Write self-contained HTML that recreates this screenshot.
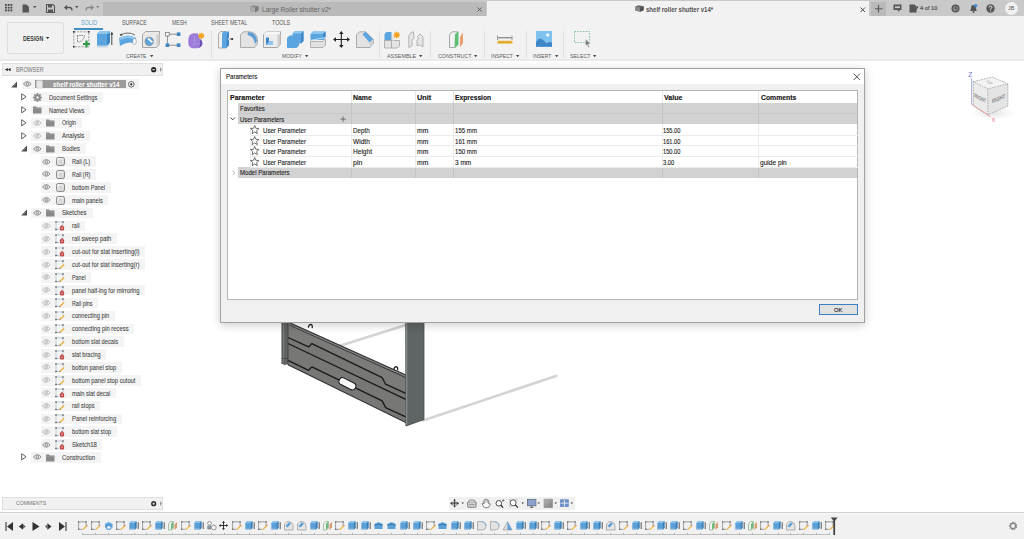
<!DOCTYPE html><html><head><meta charset="utf-8"><style>
*{box-sizing:border-box;margin:0;padding:0}
html,body{width:1024px;height:539px;overflow:hidden;background:#fff;font-family:"Liberation Sans",sans-serif;}
.a{position:absolute}
.t{position:absolute;white-space:nowrap;line-height:1}
svg{position:absolute;overflow:visible}
</style></head><body>

<div class="a" style="left:0;top:0;width:1024px;height:16px;background:#c9c9c9"></div>
<svg style="left:4.9px;top:4.4px" width="8" height="8"><rect x="0.00" y="0.00" width="1.8" height="1.8" fill="#444"/><rect x="0.00" y="2.75" width="1.8" height="1.8" fill="#444"/><rect x="0.00" y="5.50" width="1.8" height="1.8" fill="#444"/><rect x="2.75" y="0.00" width="1.8" height="1.8" fill="#444"/><rect x="2.75" y="2.75" width="1.8" height="1.8" fill="#444"/><rect x="2.75" y="5.50" width="1.8" height="1.8" fill="#444"/><rect x="5.50" y="0.00" width="1.8" height="1.8" fill="#444"/><rect x="5.50" y="2.75" width="1.8" height="1.8" fill="#444"/><rect x="5.50" y="5.50" width="1.8" height="1.8" fill="#444"/></svg>
<svg style="left:22px;top:4px" width="8" height="9"><path d="M0.5 0.5H4.5L7 3V8.5H0.5Z" fill="#555"/></svg>
<svg style="left:33px;top:6px" width="4" height="3"><path d="M0 0H3.5L1.75 2.2Z" fill="#555"/></svg>
<svg style="left:46px;top:4px" width="9" height="9"><path d="M0.5 0.5H7L8.5 2V8.5H0.5Z" fill="none" stroke="#555" stroke-width="1.1"/><rect x="2" y="1" width="4" height="2.5" fill="#555"/><rect x="2" y="5.5" width="5" height="2.5" fill="#555"/></svg>
<svg style="left:64px;top:4px" width="9" height="8"><path d="M2 3.5H5.5Q8 3.5 8 6.5" fill="none" stroke="#555" stroke-width="1.3"/><path d="M0 3.5L3 0.8V6.2Z" fill="#555"/></svg>
<svg style="left:75px;top:6px" width="4" height="3"><path d="M0 0H3.5L1.75 2.2Z" fill="#555"/></svg>
<svg style="left:85px;top:4px" width="9" height="8"><path d="M7 3.5H3.5Q1 3.5 1 6.5" fill="none" stroke="#888" stroke-width="1.3"/><path d="M9 3.5L6 0.8V6.2Z" fill="#888"/></svg>
<svg style="left:96px;top:6px" width="4" height="3"><path d="M0 0H3.5L1.75 2.2Z" fill="#888"/></svg>
<div class="a" style="left:103px;top:2px;width:383px;height:14px;background:#bababa"></div>
<svg style="left:250.2px;top:5.1px" width="9" height="8"><path d="M0.3 1.6L3.6 0.2L8.4 1.2V5.6L5 7.3L0.3 6Z" fill="#8e8e8e"/><path d="M0.3 1.6L5 2.7V7.3L0.3 6Z" fill="#a9a9a9"/><path d="M5 2.7L8.4 1.2V5.6L5 7.3Z" fill="#7a7a7a"/></svg>
<div class="t" style="left:261.6px;top:7.00px;font-size:6.9px;color:#666;transform:scaleX(0.9520);transform-origin:0 0;">Large Roller shutter v2*</div>
<svg style="left:477px;top:7px" width="5" height="5"><path d="M0.5 0.5L4.5 4.5M4.5 0.5L0.5 4.5" stroke="#555" stroke-width="0.9"/></svg>
<div class="a" style="left:487px;top:1px;width:382px;height:15px;background:#f2f2f2"></div>
<svg style="left:634.8px;top:5.2px" width="9" height="7"><path d="M0.3 1.6L3.6 0.2L8.6 1.2V5.3L5.2 6.8L0.3 5.6Z" fill="#6a6a6a"/><path d="M0.3 1.6L5.2 2.6V6.8L0.3 5.6Z" fill="#8a8a8a"/><path d="M5.2 2.6L8.6 1.2V5.3L5.2 6.8Z" fill="#4e4e4e"/></svg>
<div class="t" style="left:645.8px;top:6.00px;font-size:7.4px;color:#505050;font-weight:bold;transform:scaleX(0.8170);transform-origin:0 0;">shelf roller shutter v14*</div>
<svg style="left:860px;top:7px" width="6" height="6"><path d="M0.5 0.5L5 5M5 0.5L0.5 5" stroke="#4a4a4a" stroke-width="1"/></svg>
<div class="a" style="left:871px;top:2px;width:15px;height:14px;background:#b9b9b9"></div>
<svg style="left:875px;top:5px" width="8" height="8"><path d="M3.5 0V7.5M0 3.75H7.5" stroke="#5a5a5a" stroke-width="1.2"/></svg>
<svg style="left:893px;top:4px" width="9" height="9"><path d="M0.5 0.5H8.5V6H6.5L6 8L4.5 6H0.5Z" fill="#555"/><rect x="2" y="2.3" width="5" height="1.8" fill="#c7c7c7"/></svg>
<svg style="left:909px;top:4px" width="10" height="9"><path d="M0.5 0.5H5.5L7.5 2.5V8.5H0.5Z" fill="#555"/><path d="M5 7.5L9 2.5" stroke="#555" stroke-width="1.3"/></svg>
<div class="t" style="left:920.4px;top:6.00px;font-size:5.9px;color:#4a4a4a;transform:scaleX(0.9700);transform-origin:0 0;-webkit-text-stroke:0.15px #4a4a4a;">4 of 10</div>
<svg style="left:951px;top:4px" width="9" height="9"><circle cx="4.5" cy="4.5" r="4" fill="#555"/><circle cx="4.5" cy="4.5" r="2.6" fill="#888"/><path d="M4.5 2.7V4.7H6" stroke="#333" stroke-width="0.7" fill="none"/></svg>
<svg style="left:969px;top:3px" width="10" height="10"><path d="M1 8H8Q7 7 7 5Q7 2 4.5 2Q2 2 2 5Q2 7 1 8Z" fill="#555"/><circle cx="4.5" cy="9" r="1" fill="#555"/><circle cx="6.8" cy="2.7" r="1.6" fill="#3c8fd8"/></svg>
<svg style="left:986px;top:4px" width="9" height="9"><circle cx="4.5" cy="4.5" r="4.2" fill="#555"/><path d="M3 3.5Q3 2 4.5 2Q6 2 6 3.3Q6 4.2 4.6 4.8V5.6" stroke="#eee" stroke-width="1" fill="none"/><circle cx="4.6" cy="7" r="0.6" fill="#eee"/></svg>
<div class="a" style="left:1005px;top:1.5px;width:13px;height:13px;border-radius:50%;background:#f1f1f1"></div>
<div class="t" style="left:1008px;top:6.00px;font-size:5.4px;color:#555;transform:scaleX(0.9838);transform-origin:0 0;">JB</div>
<div class="a" style="left:0;top:16px;width:1024px;height:43px;background:#f2f2f2"></div>
<div class="a" style="left:0;top:59px;width:1024px;height:2px;background:#eaeaea"></div>
<div class="a" style="left:7px;top:22px;width:57px;height:32px;border:1px solid #dedede;border-radius:2px;background:#f1f1f1"></div>
<div class="t" style="left:22.6px;top:36.00px;font-size:6.5px;color:#3a3a3a;font-weight:bold;transform:scaleX(0.8146);transform-origin:0 0;">DESIGN</div>
<svg style="left:45.6px;top:37.3px" width="4" height="3"><path d="M0 0H3.3L1.65 2.1Z" fill="#222"/></svg>
<div class="t" style="left:80.5px;top:20.00px;font-size:6.3px;color:#5ba3c9;transform:scaleX(0.8516);transform-origin:0 0;">SOLID</div>
<div class="t" style="left:122px;top:20.00px;font-size:6.3px;color:#555;transform:scaleX(0.8368);transform-origin:0 0;">SURFACE</div>
<div class="t" style="left:172.2px;top:20.00px;font-size:6.3px;color:#555;transform:scaleX(0.8076);transform-origin:0 0;">MESH</div>
<div class="t" style="left:211.3px;top:20.00px;font-size:6.3px;color:#555;transform:scaleX(0.8361);transform-origin:0 0;">SHEET METAL</div>
<div class="t" style="left:272.2px;top:20.00px;font-size:6.3px;color:#555;transform:scaleX(0.8522);transform-origin:0 0;">TOOLS</div>
<div class="a" style="left:74px;top:28px;width:29px;height:2px;background:#3f8fc0"></div>
<div class="t" style="left:125.9px;top:53.00px;font-size:6.2px;color:#5a5a5a;transform:scaleX(0.8303);transform-origin:0 0;">CREATE</div>
<svg style="left:149.50px;top:54.6px" width="4" height="3"><path d="M0 0H3.4L1.7 2.2Z" fill="#444"/></svg>
<div class="t" style="left:281.5px;top:53.00px;font-size:6.2px;color:#5a5a5a;transform:scaleX(0.8296);transform-origin:0 0;">MODIFY</div>
<svg style="left:305.10px;top:54.6px" width="4" height="3"><path d="M0 0H3.4L1.7 2.2Z" fill="#444"/></svg>
<div class="t" style="left:386.9px;top:53.00px;font-size:6.2px;color:#5a5a5a;transform:scaleX(0.8766);transform-origin:0 0;">ASSEMBLE</div>
<svg style="left:419.30px;top:54.6px" width="4" height="3"><path d="M0 0H3.4L1.7 2.2Z" fill="#444"/></svg>
<div class="t" style="left:438px;top:53.00px;font-size:6.2px;color:#5a5a5a;transform:scaleX(0.8608);transform-origin:0 0;">CONSTRUCT</div>
<svg style="left:473.90px;top:54.6px" width="4" height="3"><path d="M0 0H3.4L1.7 2.2Z" fill="#444"/></svg>
<div class="t" style="left:490.7px;top:53.00px;font-size:6.2px;color:#5a5a5a;transform:scaleX(0.8187);transform-origin:0 0;">INSPECT</div>
<svg style="left:515.60px;top:54.6px" width="4" height="3"><path d="M0 0H3.4L1.7 2.2Z" fill="#444"/></svg>
<div class="t" style="left:533.2px;top:53.00px;font-size:6.2px;color:#5a5a5a;transform:scaleX(0.8089);transform-origin:0 0;">INSERT</div>
<svg style="left:554.60px;top:54.6px" width="4" height="3"><path d="M0 0H3.4L1.7 2.2Z" fill="#444"/></svg>
<div class="t" style="left:570.1px;top:53.00px;font-size:6.2px;color:#5a5a5a;transform:scaleX(0.8541);transform-origin:0 0;">SELECT</div>
<svg style="left:593.20px;top:54.6px" width="4" height="3"><path d="M0 0H3.4L1.7 2.2Z" fill="#444"/></svg>
<div class="a" style="left:211px;top:31px;width:1px;height:26.5px;background:#e0e0e0"></div>
<div class="a" style="left:378.5px;top:31px;width:1px;height:26.5px;background:#e0e0e0"></div>
<div class="a" style="left:430px;top:31px;width:1px;height:26.5px;background:#e0e0e0"></div>
<div class="a" style="left:483.5px;top:31px;width:1px;height:26.5px;background:#e0e0e0"></div>
<div class="a" style="left:526px;top:31px;width:1px;height:26.5px;background:#e0e0e0"></div>
<div class="a" style="left:562.5px;top:31px;width:1px;height:26.5px;background:#e0e0e0"></div>
<svg style="left:73px;top:31px" width="18" height="18"><rect x="0.8" y="0.8" width="15" height="15" fill="none" stroke="#8a8a8a" stroke-width="0.8" stroke-dasharray="2.2,1"/>
<rect x="0" y="0" width="1.6" height="1.6" fill="#333"/><rect x="15" y="0" width="1.6" height="1.6" fill="#333"/><rect x="0" y="15" width="1.6" height="1.6" fill="#333"/>
<path d="M4.5 4.5V11H5.5Q11 10 11.5 4.5H4.5" fill="none" stroke="#555" stroke-width="0.7" stroke-dasharray="1.5,0.8"/>
<path d="M13.5 9.5V16.5M10 13H17" stroke="#2f9a45" stroke-width="2.2"/></svg>
<svg style="left:97px;top:31px" width="16" height="18"><path d="M0 3L3 0H13V12L10 15H0Z" fill="#5aa5e0"/><path d="M0 3L3 0H13L10 3Z" fill="#8ec6f0"/><path d="M10 3H13V12L10 15Z" fill="#3f86c4"/>
<path d="M0 14.5H10L13 11.5V13.5L10 16.5H0Z" fill="#c5d8e8"/><path d="M14.8 2V14" stroke="#333" stroke-width="0.9"/><path d="M13.3 3.5L14.8 0.8L16.3 3.5Z" fill="#333"/></svg>
<svg style="left:119px;top:32px" width="19" height="16"><path d="M1.5 3Q9 -1 16 3" fill="none" stroke="#444" stroke-width="0.8"/><path d="M0.5 3L3 1.5L2.5 4Z" fill="#222"/>
<path d="M0 6Q9 1 17 6V12Q9 8 1 14Z" fill="#5aa5e0"/><path d="M0 6Q9 1 17 6L15 8Q9 4 2 8Z" fill="#8ec6f0"/><ellipse cx="15.5" cy="9.5" rx="1.8" ry="3" fill="#fff" stroke="#888" stroke-width="0.6"/></svg>
<svg style="left:142px;top:31px" width="18" height="17"><path d="M0.5 3.5L3.5 0.5H17.5V13.5L14.5 16.5H0.5Z" fill="#e9e9e9" stroke="#9c9c9c" stroke-width="0.9"/><path d="M14.5 3.5H17.5V13.5L14.5 16.5Z" fill="#cfcfcf"/>
<circle cx="7.2" cy="10.4" r="4.1" fill="#5aa5e0" stroke="#8a8a8a" stroke-width="0.8"/><path d="M6 7.3L10.4 11.3" stroke="#fff" stroke-width="1.7"/></svg>
<svg style="left:165px;top:32px" width="16" height="16"><path d="M2.4 2.2H13.5M2.4 2.2V13.2M2.4 13.2H13.5" stroke="#777" stroke-width="0.8"/><rect x="0.6" y="0.4" width="3.6" height="3.6" fill="#fff" stroke="#777" stroke-width="0.8"/>
<rect x="11.8" y="0.4" width="3.6" height="3.6" fill="#3f86c4"/><rect x="0.6" y="11.4" width="3.6" height="3.6" fill="#3f86c4"/><rect x="11.8" y="11.4" width="3.6" height="3.6" fill="#3f86c4"/></svg>
<svg style="left:188px;top:32px" width="18" height="17"><path d="M0.5 6Q1.5 1.5 6 1.2L10 1.5L11.5 6.5L13.5 8Q15.5 13 12 15.5L9 16.2H4.5Q0.5 15.5 0.3 11Z" fill="#9b7ad8"/><path d="M11.5 7Q15.5 9 14 13.5L11 16Q13 11 11.5 7Z" fill="#6d4fb2"/>
<path d="M3 8H12M6.5 3V15M3 12H12" stroke="#b79ae8" stroke-width="0.5"/><path d="M16.90 3.80L15.42 4.68L15.85 6.35L14.18 5.92L13.30 7.40L12.42 5.92L10.75 6.35L11.18 4.68L9.70 3.80L11.18 2.92L10.75 1.25L12.42 1.68L13.30 0.20L14.18 1.68L15.85 1.25L15.42 2.92Z" fill="#f2a51e"/></svg>
<svg style="left:218px;top:31px" width="16" height="18"><path d="M0.5 3L2.5 0.5H8V17H0.5Z" fill="#f0f0f0" stroke="#9a9a9a" stroke-width="0.8"/><path d="M4 2L6 0.5H11V14L8 17H4Z" fill="#5aa5e0"/><path d="M9 3L11 0.5V14L8.5 17Z" fill="#3f86c4"/>
<circle cx="11" cy="8" r="0.9" fill="#eee"/><path d="M11.5 8H14" stroke="#222" stroke-width="0.7"/><circle cx="14.2" cy="8" r="1" fill="#222"/></svg>
<svg style="left:240px;top:31px" width="18" height="17"><path d="M0.5 4L3.5 0.8H9Q17.5 1 17.5 10V13L14.5 16.5H0.5Z" fill="#e3e3e3" stroke="#9a9a9a" stroke-width="0.8"/><path d="M8 1Q16.5 1.5 17 10L15 13Q14 5 7.5 4Z" fill="#5d9ed5"/><path d="M14.5 13.5L17.5 10.5V13L14.5 16.5Z" fill="#cfcfcf"/></svg>
<svg style="left:263px;top:31px" width="18" height="17"><path d="M0.5 3.5L3.5 0.5H17.5V13.5L14.5 16.5H0.5Z" fill="#ececec" stroke="#9c9c9c" stroke-width="0.9"/><path d="M3.5 0.5H17.5L14.5 3.5H0.5Z" fill="#f7f7f7"/><path d="M14.5 3.5H17.5V13.5L14.5 16.5Z" fill="#cdcdcd"/>
<path d="M3 6.5H6V10.5H10V14H3Z" fill="#3f86c4"/><path d="M6 10.5H10V14H3Z" fill="#8ec6f0"/></svg>
<svg style="left:287px;top:31px" width="17" height="17"><path d="M5.5 2.5L8 0H16.5V10L14 12.5H12V14.5L9.5 17H0V7L2.5 4.5H5.5Z" fill="#5aa5e0"/><path d="M14 2.5L16.5 0V10L14 12.5Z" fill="#3f86c4"/><path d="M5.5 2.5L8 0H16.5L14 2.5Z" fill="#8ec6f0"/></svg>
<svg style="left:310px;top:31px" width="17" height="17"><path d="M0.5 3L3 0.5H15.5V6.5L13 9H0.5Z" fill="#5aa5e0"/><path d="M3 0.5H15.5L13 3H0.5Z" fill="#8ec6f0"/><path d="M13 3L15.5 0.5V6.5L13 9Z" fill="#3f86c4"/>
<path d="M0 9.5L15.5 6.5" stroke="#bfe3f7" stroke-width="1"/><path d="M0.5 10.5H13L15.5 8V14L13 16.5H0.5Z" fill="#e2e2e2" stroke="#999" stroke-width="0.7"/></svg>
<svg style="left:333px;top:31px" width="17" height="17"><path d="M8.3 1.5V15.5M1.5 8.5H15.5" stroke="#222" stroke-width="1.1"/><path d="M8.3 0L10.5 3H6.1Z M8.3 17L10.5 14H6.1Z M0 8.5L3 6.3V10.7Z M17 8.5L14 6.3V10.7Z" fill="#222"/></svg>
<svg style="left:356px;top:31px" width="18" height="17"><path d="M0.5 4L3.5 0.8H9.5L17.5 8.5V12.5L14 16.5H0.5Z" fill="#e3e3e3" stroke="#9a9a9a" stroke-width="0.8"/><path d="M6.5 3.5L9.5 0.8L17 8.3L13.5 11.5Z" fill="#5ea6e0"/><path d="M13.5 11.5L17.5 8.5V12.5L14 16.5Z" fill="#cfcfcf"/></svg>
<svg style="left:384px;top:31px" width="17" height="17"><path d="M0.5 3L2.5 1H7.5V9.5H0.5Z" fill="#5aa5e0"/><path d="M0.5 9.5H15.5V15L13.5 17H0.5Z" fill="#e4e4e4" stroke="#999" stroke-width="0.7"/><path d="M7.5 5V17" stroke="#888" stroke-width="0.6"/>
<path d="M7.5 9.5V5H10V9.5" fill="#e4e4e4"/><path d="M16.50 4.00L14.92 4.92L15.39 6.69L13.62 6.22L12.70 7.80L11.78 6.22L10.01 6.69L10.48 4.92L8.90 4.00L10.48 3.08L10.01 1.31L11.78 1.78L12.70 0.20L13.62 1.78L15.39 1.31L14.92 3.08Z" fill="#f2a51e"/></svg>
<svg style="left:408px;top:31px" width="16" height="17"><path d="M0.8 5L3 1.5L5.5 0.8L6 7.5L4 8.5V15L0.8 16.5Z" fill="#e6e6e6" stroke="#999" stroke-width="0.7"/><path d="M9.5 5.5L12 3L15 6V16L12 14L9 14.5V9L10.5 8Z" fill="#e6e6e6" stroke="#999" stroke-width="0.7"/></svg>
<svg style="left:449px;top:31px" width="18" height="17"><path d="M0.5 4L3 0.8H8.5V13.5L6 16.5H0.5Z" fill="#f2f2f2" stroke="#888" stroke-width="0.7"/><path d="M6 3.5L8.5 0.8H9.5V13.5L6.5 16.5H5.5Z" fill="#5fbf78"/><path d="M11 6L14 1.5V12L11 16.5Z" fill="#e8a070"/></svg>
<svg style="left:497px;top:35px" width="16" height="10"><path d="M0.5 0.5V5M15 0.5V5" stroke="#777" stroke-width="0.7"/><path d="M1 2.8H14.5" stroke="#444" stroke-width="0.8"/><rect x="0.5" y="5.8" width="15" height="2.8" fill="#e8b030"/><path d="M2 7.2H14" stroke="#c08a10" stroke-width="0.5" stroke-dasharray="1,1"/></svg>
<svg style="left:536px;top:31px" width="16" height="16"><rect x="0" y="0" width="16" height="15.7" fill="#7ec0ee"/><path d="M0 15.7V11Q3 6 5.5 8Q9 10 10.5 12.5Q12.5 10 16 11.5V15.7Z" fill="#3d87c8"/><circle cx="11.7" cy="4" r="1.8" fill="#eaf6ff"/></svg>
<svg style="left:574px;top:31px" width="17" height="17"><rect x="0.5" y="0.5" width="15" height="11" fill="none" stroke="#6fb88a" stroke-width="0.8" stroke-dasharray="1.6,1.2"/><path d="M11.5 8L11.5 15L13 13.5L14.5 16.5L15.5 16L14.2 13H16.5Z" fill="#777" stroke="#f2f2f2" stroke-width="0.4"/></svg>
<div class="a" style="left:2px;top:63px;width:161px;height:13px;background:#f1f1f1;border:1px solid #dfdfdf"></div>
<svg style="left:4.8px;top:67.7px" width="6" height="4"><path d="M0 1.6L2.8 0V3.2Z M2.8 1.6L5.6 0V3.2Z" fill="#222"/></svg>
<div class="t" style="left:15.8px;top:67.00px;font-size:6.5px;color:#727272;transform:scaleX(0.8218);transform-origin:0 0;">BROWSER</div>
<svg style="left:151px;top:66.5px" width="6" height="6"><circle cx="2.7" cy="2.7" r="2.6" fill="#222"/><rect x="1.3" y="2.2" width="2.8" height="1" fill="#eee"/></svg>
<svg style="left:159.5px;top:67px" width="3" height="5"><path d="M0 0L2 2.5L0 5Z" fill="#999"/></svg>
<div class="a" style="left:21.7px;top:79.10px;width:117.3px;height:10px;background:#f3f3f3"></div>
<div class="a" style="left:35px;top:80.20px;width:91px;height:8px;background:#9a9a9a"></div>
<svg style="left:11.00px;top:80.70px" width="7" height="7"><path d="M0.2 6.6L6 0.4V6.6Z" fill="#4a4a4a"/><path d="M2.8 5.4L5 3.1" stroke="#bbb" stroke-width="0.5"/></svg>
<svg style="left:22.90px;top:81.40px" width="9" height="6"><path d="M0.5 2.9Q4.3 -1.6 8.1 2.9Q4.3 7.4 0.5 2.9Z" fill="none" stroke="#858585" stroke-width="0.95"/><circle cx="4.3" cy="2.9" r="1.25" fill="none" stroke="#858585" stroke-width="0.9"/></svg>
<svg style="left:36px;top:80.10px" width="7" height="8.5"><rect x="0.5" y="0.5" width="6" height="7.5" rx="1" fill="#e9e9e9" stroke="#c8c8c8" stroke-width="0.5"/><path d="M0.5 2.5H6.5" stroke="#ccc" stroke-width="0.5"/></svg>
<div class="t" style="left:53.1px;top:82.00px;font-size:6.7px;color:#fff;font-weight:bold;transform:scaleX(0.9268);transform-origin:0 0;">shelf roller shutter v14</div>
<svg style="left:128.3px;top:81.00px" width="7" height="7"><circle cx="3.3" cy="3.3" r="2.8" fill="none" stroke="#333" stroke-width="0.7"/><circle cx="3.3" cy="3.3" r="1.1" fill="#222"/></svg>
<div class="a" style="left:31.2px;top:91.96px;width:71.8px;height:10.5px;background:#f4f4f4"></div>
<svg style="left:21.20px;top:93.26px" width="7" height="8"><path d="M0.7 0.7L5.1 3.8L0.7 6.9Z" fill="none" stroke="#606060" stroke-width="1" stroke-linejoin="round"/></svg>
<svg style="left:32.6px;top:92.56px" width="9" height="9"><g transform="translate(4.5 4.5)"><circle r="3" fill="#8a8a8a"/><rect x="-0.9" y="-4.4" width="1.8" height="2.2" fill="#8a8a8a" transform="rotate(0)"/><rect x="-0.9" y="-4.4" width="1.8" height="2.2" fill="#8a8a8a" transform="rotate(45)"/><rect x="-0.9" y="-4.4" width="1.8" height="2.2" fill="#8a8a8a" transform="rotate(90)"/><rect x="-0.9" y="-4.4" width="1.8" height="2.2" fill="#8a8a8a" transform="rotate(135)"/><rect x="-0.9" y="-4.4" width="1.8" height="2.2" fill="#8a8a8a" transform="rotate(180)"/><rect x="-0.9" y="-4.4" width="1.8" height="2.2" fill="#8a8a8a" transform="rotate(225)"/><rect x="-0.9" y="-4.4" width="1.8" height="2.2" fill="#8a8a8a" transform="rotate(270)"/><rect x="-0.9" y="-4.4" width="1.8" height="2.2" fill="#8a8a8a" transform="rotate(315)"/><circle r="1.3" fill="#f0f0f0"/></g></svg>
<div class="t" style="left:49px;top:95.00px;font-size:6.6px;color:#444;transform:scaleX(0.8662);transform-origin:0 0;-webkit-text-stroke:0.08px #444;">Document Settings</div>
<div class="a" style="left:31.2px;top:104.83px;width:58.8px;height:10.5px;background:#f4f4f4"></div>
<svg style="left:21.20px;top:106.13px" width="7" height="8"><path d="M0.7 0.7L5.1 3.8L0.7 6.9Z" fill="none" stroke="#606060" stroke-width="1" stroke-linejoin="round"/></svg>
<svg style="left:33px;top:106.23px" width="9" height="8"><path d="M0 0.5H3L4 1.5H8.5V7.5H0Z" fill="#8a8a8a"/><path d="M0 2.2H8.5" stroke="#a9a9a9" stroke-width="0.5"/></svg>
<div class="t" style="left:49px;top:108.00px;font-size:6.6px;color:#444;transform:scaleX(0.8696);transform-origin:0 0;-webkit-text-stroke:0.08px #444;">Named Views</div>
<div class="a" style="left:31.2px;top:117.69px;width:50.8px;height:10.5px;background:#f4f4f4"></div>
<svg style="left:21.20px;top:118.99px" width="7" height="8"><path d="M0.7 0.7L5.1 3.8L0.7 6.9Z" fill="none" stroke="#606060" stroke-width="1" stroke-linejoin="round"/></svg>
<svg style="left:32.90px;top:119.99px" width="9" height="6"><path d="M0.5 2.9Q4.3 -1.6 8.1 2.9Q4.3 7.4 0.5 2.9Z" fill="none" stroke="#bcbcbc" stroke-width="0.95"/><circle cx="4.3" cy="2.9" r="1.25" fill="none" stroke="#bcbcbc" stroke-width="0.9"/><path d="M2.6 5.6L6 0.2" stroke="#bcbcbc" stroke-width="0.7"/></svg>
<svg style="left:46px;top:119.09px" width="9" height="8"><path d="M0 0.5H3L4 1.5H8.5V7.5H0Z" fill="#8a8a8a"/><path d="M0 2.2H8.5" stroke="#a9a9a9" stroke-width="0.5"/></svg>
<div class="t" style="left:62.3px;top:120.00px;font-size:6.6px;color:#444;transform:scaleX(0.7953);transform-origin:0 0;-webkit-text-stroke:0.08px #444;">Origin</div>
<div class="a" style="left:31.2px;top:130.56px;width:59.2px;height:10.5px;background:#f4f4f4"></div>
<svg style="left:21.20px;top:131.86px" width="7" height="8"><path d="M0.7 0.7L5.1 3.8L0.7 6.9Z" fill="none" stroke="#606060" stroke-width="1" stroke-linejoin="round"/></svg>
<svg style="left:32.90px;top:132.86px" width="9" height="6"><path d="M0.5 2.9Q4.3 -1.6 8.1 2.9Q4.3 7.4 0.5 2.9Z" fill="none" stroke="#bcbcbc" stroke-width="0.95"/><circle cx="4.3" cy="2.9" r="1.25" fill="none" stroke="#bcbcbc" stroke-width="0.9"/><path d="M2.6 5.6L6 0.2" stroke="#bcbcbc" stroke-width="0.7"/></svg>
<svg style="left:46px;top:131.96px" width="9" height="8"><path d="M0 0.5H3L4 1.5H8.5V7.5H0Z" fill="#8a8a8a"/><path d="M0 2.2H8.5" stroke="#a9a9a9" stroke-width="0.5"/></svg>
<div class="t" style="left:62.3px;top:133.00px;font-size:6.6px;color:#444;transform:scaleX(0.9115);transform-origin:0 0;-webkit-text-stroke:0.08px #444;">Analysis</div>
<div class="a" style="left:31.2px;top:143.43px;width:54.8px;height:10.5px;background:#f4f4f4"></div>
<svg style="left:20.50px;top:145.03px" width="7" height="7"><path d="M0.2 6.6L6 0.4V6.6Z" fill="#4a4a4a"/><path d="M2.8 5.4L5 3.1" stroke="#bbb" stroke-width="0.5"/></svg>
<svg style="left:32.90px;top:145.72px" width="9" height="6"><path d="M0.5 2.9Q4.3 -1.6 8.1 2.9Q4.3 7.4 0.5 2.9Z" fill="none" stroke="#858585" stroke-width="0.95"/><circle cx="4.3" cy="2.9" r="1.25" fill="none" stroke="#858585" stroke-width="0.9"/></svg>
<svg style="left:46px;top:144.82px" width="9" height="8"><path d="M0 0.5H3L4 1.5H8.5V7.5H0Z" fill="#8a8a8a"/><path d="M0 2.2H8.5" stroke="#a9a9a9" stroke-width="0.5"/></svg>
<div class="t" style="left:62.3px;top:146.00px;font-size:6.6px;color:#444;transform:scaleX(0.8920);transform-origin:0 0;-webkit-text-stroke:0.08px #444;">Bodies</div>
<div class="a" style="left:40.8px;top:156.29px;width:55.0px;height:10.5px;background:#f4f4f4"></div>
<svg style="left:42.20px;top:158.59px" width="9" height="6"><path d="M0.5 2.9Q4.3 -1.6 8.1 2.9Q4.3 7.4 0.5 2.9Z" fill="none" stroke="#858585" stroke-width="0.95"/><circle cx="4.3" cy="2.9" r="1.25" fill="none" stroke="#858585" stroke-width="0.9"/></svg>
<svg style="left:55.5px;top:156.99px" width="9" height="9"><defs><linearGradient id="bg1" x1="0" y1="0" x2="1" y2="1"><stop offset="0" stop-color="#fafafa"/><stop offset="1" stop-color="#cfcfcf"/></linearGradient></defs><rect x="0.5" y="0.5" width="8" height="8" rx="1.8" fill="url(#bg1)" stroke="#7d7d7d" stroke-width="0.9"/><rect x="2.6" y="2.6" width="3.5" height="4" fill="#d6d6d6"/></svg>
<div class="t" style="left:71.9px;top:159.00px;font-size:6.6px;color:#444;transform:scaleX(0.8557);transform-origin:0 0;-webkit-text-stroke:0.08px #444;">Rail (L)</div>
<div class="a" style="left:40.8px;top:169.16px;width:55.2px;height:10.5px;background:#f4f4f4"></div>
<svg style="left:42.20px;top:171.46px" width="9" height="6"><path d="M0.5 2.9Q4.3 -1.6 8.1 2.9Q4.3 7.4 0.5 2.9Z" fill="none" stroke="#858585" stroke-width="0.95"/><circle cx="4.3" cy="2.9" r="1.25" fill="none" stroke="#858585" stroke-width="0.9"/></svg>
<svg style="left:55.5px;top:169.86px" width="9" height="9"><defs><linearGradient id="bg1" x1="0" y1="0" x2="1" y2="1"><stop offset="0" stop-color="#fafafa"/><stop offset="1" stop-color="#cfcfcf"/></linearGradient></defs><rect x="0.5" y="0.5" width="8" height="8" rx="1.8" fill="url(#bg1)" stroke="#7d7d7d" stroke-width="0.9"/><rect x="2.6" y="2.6" width="3.5" height="4" fill="#d6d6d6"/></svg>
<div class="t" style="left:71.9px;top:172.00px;font-size:6.6px;color:#444;transform:scaleX(0.8227);transform-origin:0 0;-webkit-text-stroke:0.08px #444;">Rail (R)</div>
<div class="a" style="left:40.8px;top:182.02px;width:69.9px;height:10.5px;background:#f4f4f4"></div>
<svg style="left:42.20px;top:184.32px" width="9" height="6"><path d="M0.5 2.9Q4.3 -1.6 8.1 2.9Q4.3 7.4 0.5 2.9Z" fill="none" stroke="#858585" stroke-width="0.95"/><circle cx="4.3" cy="2.9" r="1.25" fill="none" stroke="#858585" stroke-width="0.9"/></svg>
<svg style="left:55.5px;top:182.72px" width="9" height="9"><defs><linearGradient id="bg1" x1="0" y1="0" x2="1" y2="1"><stop offset="0" stop-color="#fafafa"/><stop offset="1" stop-color="#cfcfcf"/></linearGradient></defs><rect x="0.5" y="0.5" width="8" height="8" rx="1.8" fill="url(#bg1)" stroke="#7d7d7d" stroke-width="0.9"/><rect x="2.6" y="2.6" width="3.5" height="4" fill="#d6d6d6"/></svg>
<div class="t" style="left:71.9px;top:185.00px;font-size:6.6px;color:#444;transform:scaleX(0.8512);transform-origin:0 0;-webkit-text-stroke:0.08px #444;">bottom Panel</div>
<div class="a" style="left:40.8px;top:194.88px;width:67.7px;height:10.5px;background:#f4f4f4"></div>
<svg style="left:42.20px;top:197.18px" width="9" height="6"><path d="M0.5 2.9Q4.3 -1.6 8.1 2.9Q4.3 7.4 0.5 2.9Z" fill="none" stroke="#858585" stroke-width="0.95"/><circle cx="4.3" cy="2.9" r="1.25" fill="none" stroke="#858585" stroke-width="0.9"/></svg>
<svg style="left:55.5px;top:195.58px" width="9" height="9"><defs><linearGradient id="bg1" x1="0" y1="0" x2="1" y2="1"><stop offset="0" stop-color="#fafafa"/><stop offset="1" stop-color="#cfcfcf"/></linearGradient></defs><rect x="0.5" y="0.5" width="8" height="8" rx="1.8" fill="url(#bg1)" stroke="#7d7d7d" stroke-width="0.9"/><rect x="2.6" y="2.6" width="3.5" height="4" fill="#d6d6d6"/></svg>
<div class="t" style="left:71.9px;top:198.00px;font-size:6.6px;color:#444;transform:scaleX(0.8683);transform-origin:0 0;-webkit-text-stroke:0.08px #444;">main panels</div>
<div class="a" style="left:31.2px;top:207.75px;width:61.39999999999999px;height:10.5px;background:#f4f4f4"></div>
<svg style="left:20.50px;top:209.35px" width="7" height="7"><path d="M0.2 6.6L6 0.4V6.6Z" fill="#4a4a4a"/><path d="M2.8 5.4L5 3.1" stroke="#bbb" stroke-width="0.5"/></svg>
<svg style="left:32.90px;top:210.05px" width="9" height="6"><path d="M0.5 2.9Q4.3 -1.6 8.1 2.9Q4.3 7.4 0.5 2.9Z" fill="none" stroke="#858585" stroke-width="0.95"/><circle cx="4.3" cy="2.9" r="1.25" fill="none" stroke="#858585" stroke-width="0.9"/></svg>
<svg style="left:46px;top:209.15px" width="9" height="8"><path d="M0 0.5H3L4 1.5H8.5V7.5H0Z" fill="#8a8a8a"/><path d="M0 2.2H8.5" stroke="#a9a9a9" stroke-width="0.5"/></svg>
<div class="t" style="left:62.3px;top:210.00px;font-size:6.6px;color:#444;transform:scaleX(0.9062);transform-origin:0 0;-webkit-text-stroke:0.08px #444;">Sketches</div>
<div class="a" style="left:40.8px;top:220.62px;width:44.2px;height:10.5px;background:#f4f4f4"></div>
<svg style="left:42.20px;top:222.91px" width="9" height="6"><path d="M0.5 2.9Q4.3 -1.6 8.1 2.9Q4.3 7.4 0.5 2.9Z" fill="none" stroke="#bcbcbc" stroke-width="0.95"/><circle cx="4.3" cy="2.9" r="1.25" fill="none" stroke="#bcbcbc" stroke-width="0.9"/><path d="M2.6 5.6L6 0.2" stroke="#bcbcbc" stroke-width="0.7"/></svg>
<svg style="left:55.4px;top:221.22px" width="10" height="10"><path d="M1 8.6V1H8V4.5" fill="none" stroke="#8ea4bc" stroke-width="0.75" stroke-dasharray="1.3,0.7"/><path d="M1.5 8.4H4" stroke="#8ea4bc" stroke-width="0.7"/><rect x="0.3" y="0.3" width="1.4" height="1.4" fill="#555"/><rect x="7.3" y="0.3" width="1.4" height="1.4" fill="#555"/><rect x="0.3" y="7.8" width="1.4" height="1.4" fill="#555"/><path d="M6 5.6V5Q7 3.6 8 5V5.6" fill="none" stroke="#b04040" stroke-width="0.8"/><path d="M4.9 6.2Q4.9 5.3 5.8 5.3H8.2Q9.1 5.3 9.1 6.2V8.4Q9.1 9.5 8 9.5H6Q4.9 9.5 4.9 8.4Z" fill="#c24848"/><rect x="6.6" y="6.5" width="0.9" height="1.6" fill="#f4d6d6"/></svg>
<div class="t" style="left:71.9px;top:223.00px;font-size:6.6px;color:#444;transform:scaleX(0.8408);transform-origin:0 0;-webkit-text-stroke:0.08px #444;">rail</div>
<div class="a" style="left:40.8px;top:233.48px;width:76.10000000000001px;height:10.5px;background:#f4f4f4"></div>
<svg style="left:42.20px;top:235.78px" width="9" height="6"><path d="M0.5 2.9Q4.3 -1.6 8.1 2.9Q4.3 7.4 0.5 2.9Z" fill="none" stroke="#bcbcbc" stroke-width="0.95"/><circle cx="4.3" cy="2.9" r="1.25" fill="none" stroke="#bcbcbc" stroke-width="0.9"/><path d="M2.6 5.6L6 0.2" stroke="#bcbcbc" stroke-width="0.7"/></svg>
<svg style="left:55.4px;top:234.08px" width="10" height="10"><path d="M1 8.6V1H8V4.5" fill="none" stroke="#8ea4bc" stroke-width="0.75" stroke-dasharray="1.3,0.7"/><path d="M1.5 8.4H4" stroke="#8ea4bc" stroke-width="0.7"/><rect x="0.3" y="0.3" width="1.4" height="1.4" fill="#555"/><rect x="7.3" y="0.3" width="1.4" height="1.4" fill="#555"/><rect x="0.3" y="7.8" width="1.4" height="1.4" fill="#555"/><path d="M6 5.6V5Q7 3.6 8 5V5.6" fill="none" stroke="#b04040" stroke-width="0.8"/><path d="M4.9 6.2Q4.9 5.3 5.8 5.3H8.2Q9.1 5.3 9.1 6.2V8.4Q9.1 9.5 8 9.5H6Q4.9 9.5 4.9 8.4Z" fill="#c24848"/><rect x="6.6" y="6.5" width="0.9" height="1.6" fill="#f4d6d6"/></svg>
<div class="t" style="left:71.9px;top:236.00px;font-size:6.6px;color:#444;transform:scaleX(0.8854);transform-origin:0 0;-webkit-text-stroke:0.08px #444;">rail sweep path</div>
<div class="a" style="left:40.8px;top:246.35px;width:104.39999999999999px;height:10.5px;background:#f4f4f4"></div>
<svg style="left:42.20px;top:248.65px" width="9" height="6"><path d="M0.5 2.9Q4.3 -1.6 8.1 2.9Q4.3 7.4 0.5 2.9Z" fill="none" stroke="#bcbcbc" stroke-width="0.95"/><circle cx="4.3" cy="2.9" r="1.25" fill="none" stroke="#bcbcbc" stroke-width="0.9"/><path d="M2.6 5.6L6 0.2" stroke="#bcbcbc" stroke-width="0.7"/></svg>
<svg style="left:55.4px;top:246.95px" width="10" height="10"><path d="M1 8.6V1H8V4.5" fill="none" stroke="#8ea4bc" stroke-width="0.75" stroke-dasharray="1.3,0.7"/><path d="M1.5 8.4H4" stroke="#8ea4bc" stroke-width="0.7"/><rect x="0.3" y="0.3" width="1.4" height="1.4" fill="#555"/><rect x="7.3" y="0.3" width="1.4" height="1.4" fill="#555"/><rect x="0.3" y="7.8" width="1.4" height="1.4" fill="#555"/><path d="M6 5.6V5Q7 3.6 8 5V5.6" fill="none" stroke="#b04040" stroke-width="0.8"/><path d="M4.9 6.2Q4.9 5.3 5.8 5.3H8.2Q9.1 5.3 9.1 6.2V8.4Q9.1 9.5 8 9.5H6Q4.9 9.5 4.9 8.4Z" fill="#c24848"/><rect x="6.6" y="6.5" width="0.9" height="1.6" fill="#f4d6d6"/></svg>
<div class="t" style="left:71.9px;top:249.00px;font-size:6.6px;color:#444;transform:scaleX(0.9079);transform-origin:0 0;-webkit-text-stroke:0.08px #444;">cut-out for slat inserting(l)</div>
<div class="a" style="left:40.8px;top:259.21px;width:104.39999999999999px;height:10.5px;background:#f4f4f4"></div>
<svg style="left:42.20px;top:261.51px" width="9" height="6"><path d="M0.5 2.9Q4.3 -1.6 8.1 2.9Q4.3 7.4 0.5 2.9Z" fill="none" stroke="#bcbcbc" stroke-width="0.95"/><circle cx="4.3" cy="2.9" r="1.25" fill="none" stroke="#bcbcbc" stroke-width="0.9"/><path d="M2.6 5.6L6 0.2" stroke="#bcbcbc" stroke-width="0.7"/></svg>
<svg style="left:55.4px;top:259.81px" width="10" height="10"><path d="M1 8.6V1H8V4.5" fill="none" stroke="#8ea4bc" stroke-width="0.75" stroke-dasharray="1.3,0.7"/><path d="M1.5 8.4H4" stroke="#8ea4bc" stroke-width="0.7"/><rect x="0.3" y="0.3" width="1.4" height="1.4" fill="#555"/><rect x="7.3" y="0.3" width="1.4" height="1.4" fill="#555"/><rect x="0.3" y="7.8" width="1.4" height="1.4" fill="#555"/><path d="M4.3 9.2L4.8 7.6L8.6 3.9L9.6 4.9L5.8 8.6Z" fill="#f0b040"/><path d="M4.3 9.2L4.8 7.6L5.8 8.6Z" fill="#7a7a7a"/></svg>
<div class="t" style="left:71.9px;top:262.00px;font-size:6.6px;color:#444;transform:scaleX(0.8991);transform-origin:0 0;-webkit-text-stroke:0.08px #444;">cut-out for slat inserting(r)</div>
<div class="a" style="left:40.8px;top:272.07px;width:50.5px;height:10.5px;background:#f4f4f4"></div>
<svg style="left:42.20px;top:274.38px" width="9" height="6"><path d="M0.5 2.9Q4.3 -1.6 8.1 2.9Q4.3 7.4 0.5 2.9Z" fill="none" stroke="#bcbcbc" stroke-width="0.95"/><circle cx="4.3" cy="2.9" r="1.25" fill="none" stroke="#bcbcbc" stroke-width="0.9"/><path d="M2.6 5.6L6 0.2" stroke="#bcbcbc" stroke-width="0.7"/></svg>
<svg style="left:55.4px;top:272.67px" width="10" height="10"><path d="M1 8.6V1H8V4.5" fill="none" stroke="#8ea4bc" stroke-width="0.75" stroke-dasharray="1.3,0.7"/><path d="M1.5 8.4H4" stroke="#8ea4bc" stroke-width="0.7"/><rect x="0.3" y="0.3" width="1.4" height="1.4" fill="#555"/><rect x="7.3" y="0.3" width="1.4" height="1.4" fill="#555"/><rect x="0.3" y="7.8" width="1.4" height="1.4" fill="#555"/><path d="M4.3 9.2L4.8 7.6L8.6 3.9L9.6 4.9L5.8 8.6Z" fill="#f0b040"/><path d="M4.3 9.2L4.8 7.6L5.8 8.6Z" fill="#7a7a7a"/></svg>
<div class="t" style="left:71.9px;top:275.00px;font-size:6.6px;color:#444;transform:scaleX(0.8116);transform-origin:0 0;-webkit-text-stroke:0.08px #444;">Panel</div>
<div class="a" style="left:40.8px;top:284.94px;width:104.39999999999999px;height:10.5px;background:#f4f4f4"></div>
<svg style="left:42.20px;top:287.24px" width="9" height="6"><path d="M0.5 2.9Q4.3 -1.6 8.1 2.9Q4.3 7.4 0.5 2.9Z" fill="none" stroke="#bcbcbc" stroke-width="0.95"/><circle cx="4.3" cy="2.9" r="1.25" fill="none" stroke="#bcbcbc" stroke-width="0.9"/><path d="M2.6 5.6L6 0.2" stroke="#bcbcbc" stroke-width="0.7"/></svg>
<svg style="left:55.4px;top:285.54px" width="10" height="10"><path d="M1 8.6V1H8V4.5" fill="none" stroke="#8ea4bc" stroke-width="0.75" stroke-dasharray="1.3,0.7"/><path d="M1.5 8.4H4" stroke="#8ea4bc" stroke-width="0.7"/><rect x="0.3" y="0.3" width="1.4" height="1.4" fill="#555"/><rect x="7.3" y="0.3" width="1.4" height="1.4" fill="#555"/><rect x="0.3" y="7.8" width="1.4" height="1.4" fill="#555"/><path d="M6 5.6V5Q7 3.6 8 5V5.6" fill="none" stroke="#b04040" stroke-width="0.8"/><path d="M4.9 6.2Q4.9 5.3 5.8 5.3H8.2Q9.1 5.3 9.1 6.2V8.4Q9.1 9.5 8 9.5H6Q4.9 9.5 4.9 8.4Z" fill="#c24848"/><rect x="6.6" y="6.5" width="0.9" height="1.6" fill="#f4d6d6"/></svg>
<div class="t" style="left:71.9px;top:288.00px;font-size:6.6px;color:#444;transform:scaleX(0.8776);transform-origin:0 0;-webkit-text-stroke:0.08px #444;">panel half-ing for mirroring</div>
<div class="a" style="left:40.8px;top:297.81px;width:57.3px;height:10.5px;background:#f4f4f4"></div>
<svg style="left:42.20px;top:300.11px" width="9" height="6"><path d="M0.5 2.9Q4.3 -1.6 8.1 2.9Q4.3 7.4 0.5 2.9Z" fill="none" stroke="#bcbcbc" stroke-width="0.95"/><circle cx="4.3" cy="2.9" r="1.25" fill="none" stroke="#bcbcbc" stroke-width="0.9"/><path d="M2.6 5.6L6 0.2" stroke="#bcbcbc" stroke-width="0.7"/></svg>
<svg style="left:55.4px;top:298.40px" width="10" height="10"><path d="M1 8.6V1H8V4.5" fill="none" stroke="#8ea4bc" stroke-width="0.75" stroke-dasharray="1.3,0.7"/><path d="M1.5 8.4H4" stroke="#8ea4bc" stroke-width="0.7"/><rect x="0.3" y="0.3" width="1.4" height="1.4" fill="#555"/><rect x="7.3" y="0.3" width="1.4" height="1.4" fill="#555"/><rect x="0.3" y="7.8" width="1.4" height="1.4" fill="#555"/><path d="M4.3 9.2L4.8 7.6L8.6 3.9L9.6 4.9L5.8 8.6Z" fill="#f0b040"/><path d="M4.3 9.2L4.8 7.6L5.8 8.6Z" fill="#7a7a7a"/></svg>
<div class="t" style="left:71.9px;top:301.00px;font-size:6.6px;color:#444;transform:scaleX(0.8100);transform-origin:0 0;-webkit-text-stroke:0.08px #444;">Rail pins</div>
<div class="a" style="left:40.8px;top:310.67px;width:74.0px;height:10.5px;background:#f4f4f4"></div>
<svg style="left:42.20px;top:312.97px" width="9" height="6"><path d="M0.5 2.9Q4.3 -1.6 8.1 2.9Q4.3 7.4 0.5 2.9Z" fill="none" stroke="#bcbcbc" stroke-width="0.95"/><circle cx="4.3" cy="2.9" r="1.25" fill="none" stroke="#bcbcbc" stroke-width="0.9"/><path d="M2.6 5.6L6 0.2" stroke="#bcbcbc" stroke-width="0.7"/></svg>
<svg style="left:55.4px;top:311.27px" width="10" height="10"><path d="M1 8.6V1H8V4.5" fill="none" stroke="#8ea4bc" stroke-width="0.75" stroke-dasharray="1.3,0.7"/><path d="M1.5 8.4H4" stroke="#8ea4bc" stroke-width="0.7"/><rect x="0.3" y="0.3" width="1.4" height="1.4" fill="#555"/><rect x="7.3" y="0.3" width="1.4" height="1.4" fill="#555"/><rect x="0.3" y="7.8" width="1.4" height="1.4" fill="#555"/><path d="M4.3 9.2L4.8 7.6L8.6 3.9L9.6 4.9L5.8 8.6Z" fill="#f0b040"/><path d="M4.3 9.2L4.8 7.6L5.8 8.6Z" fill="#7a7a7a"/></svg>
<div class="t" style="left:71.9px;top:313.00px;font-size:6.6px;color:#444;transform:scaleX(0.8740);transform-origin:0 0;-webkit-text-stroke:0.08px #444;">connecting pin</div>
<div class="a" style="left:40.8px;top:323.54px;width:93.39999999999999px;height:10.5px;background:#f4f4f4"></div>
<svg style="left:42.20px;top:325.84px" width="9" height="6"><path d="M0.5 2.9Q4.3 -1.6 8.1 2.9Q4.3 7.4 0.5 2.9Z" fill="none" stroke="#bcbcbc" stroke-width="0.95"/><circle cx="4.3" cy="2.9" r="1.25" fill="none" stroke="#bcbcbc" stroke-width="0.9"/><path d="M2.6 5.6L6 0.2" stroke="#bcbcbc" stroke-width="0.7"/></svg>
<svg style="left:55.4px;top:324.13px" width="10" height="10"><path d="M1 8.6V1H8V4.5" fill="none" stroke="#8ea4bc" stroke-width="0.75" stroke-dasharray="1.3,0.7"/><path d="M1.5 8.4H4" stroke="#8ea4bc" stroke-width="0.7"/><rect x="0.3" y="0.3" width="1.4" height="1.4" fill="#555"/><rect x="7.3" y="0.3" width="1.4" height="1.4" fill="#555"/><rect x="0.3" y="7.8" width="1.4" height="1.4" fill="#555"/><path d="M4.3 9.2L4.8 7.6L8.6 3.9L9.6 4.9L5.8 8.6Z" fill="#f0b040"/><path d="M4.3 9.2L4.8 7.6L5.8 8.6Z" fill="#7a7a7a"/></svg>
<div class="t" style="left:71.9px;top:326.00px;font-size:6.6px;color:#444;transform:scaleX(0.8867);transform-origin:0 0;-webkit-text-stroke:0.08px #444;">connecting pin recess</div>
<div class="a" style="left:40.8px;top:336.40px;width:83.0px;height:10.5px;background:#f4f4f4"></div>
<svg style="left:42.20px;top:338.70px" width="9" height="6"><path d="M0.5 2.9Q4.3 -1.6 8.1 2.9Q4.3 7.4 0.5 2.9Z" fill="none" stroke="#bcbcbc" stroke-width="0.95"/><circle cx="4.3" cy="2.9" r="1.25" fill="none" stroke="#bcbcbc" stroke-width="0.9"/><path d="M2.6 5.6L6 0.2" stroke="#bcbcbc" stroke-width="0.7"/></svg>
<svg style="left:55.4px;top:337.00px" width="10" height="10"><path d="M1 8.6V1H8V4.5" fill="none" stroke="#8ea4bc" stroke-width="0.75" stroke-dasharray="1.3,0.7"/><path d="M1.5 8.4H4" stroke="#8ea4bc" stroke-width="0.7"/><rect x="0.3" y="0.3" width="1.4" height="1.4" fill="#555"/><rect x="7.3" y="0.3" width="1.4" height="1.4" fill="#555"/><rect x="0.3" y="7.8" width="1.4" height="1.4" fill="#555"/><path d="M4.3 9.2L4.8 7.6L8.6 3.9L9.6 4.9L5.8 8.6Z" fill="#f0b040"/><path d="M4.3 9.2L4.8 7.6L5.8 8.6Z" fill="#7a7a7a"/></svg>
<div class="t" style="left:71.9px;top:339.00px;font-size:6.6px;color:#444;transform:scaleX(0.8686);transform-origin:0 0;-webkit-text-stroke:0.08px #444;">bottom slat decals</div>
<div class="a" style="left:40.8px;top:349.27px;width:65.5px;height:10.5px;background:#f4f4f4"></div>
<svg style="left:42.20px;top:351.57px" width="9" height="6"><path d="M0.5 2.9Q4.3 -1.6 8.1 2.9Q4.3 7.4 0.5 2.9Z" fill="none" stroke="#bcbcbc" stroke-width="0.95"/><circle cx="4.3" cy="2.9" r="1.25" fill="none" stroke="#bcbcbc" stroke-width="0.9"/><path d="M2.6 5.6L6 0.2" stroke="#bcbcbc" stroke-width="0.7"/></svg>
<svg style="left:55.4px;top:349.87px" width="10" height="10"><path d="M1 8.6V1H8V4.5" fill="none" stroke="#8ea4bc" stroke-width="0.75" stroke-dasharray="1.3,0.7"/><path d="M1.5 8.4H4" stroke="#8ea4bc" stroke-width="0.7"/><rect x="0.3" y="0.3" width="1.4" height="1.4" fill="#555"/><rect x="7.3" y="0.3" width="1.4" height="1.4" fill="#555"/><rect x="0.3" y="7.8" width="1.4" height="1.4" fill="#555"/><path d="M6 5.6V5Q7 3.6 8 5V5.6" fill="none" stroke="#b04040" stroke-width="0.8"/><path d="M4.9 6.2Q4.9 5.3 5.8 5.3H8.2Q9.1 5.3 9.1 6.2V8.4Q9.1 9.5 8 9.5H6Q4.9 9.5 4.9 8.4Z" fill="#c24848"/><rect x="6.6" y="6.5" width="0.9" height="1.6" fill="#f4d6d6"/></svg>
<div class="t" style="left:71.9px;top:352.00px;font-size:6.6px;color:#444;transform:scaleX(0.8504);transform-origin:0 0;-webkit-text-stroke:0.08px #444;">slat bracing</div>
<div class="a" style="left:40.8px;top:362.13px;width:81.0px;height:10.5px;background:#f4f4f4"></div>
<svg style="left:42.20px;top:364.43px" width="9" height="6"><path d="M0.5 2.9Q4.3 -1.6 8.1 2.9Q4.3 7.4 0.5 2.9Z" fill="none" stroke="#bcbcbc" stroke-width="0.95"/><circle cx="4.3" cy="2.9" r="1.25" fill="none" stroke="#bcbcbc" stroke-width="0.9"/><path d="M2.6 5.6L6 0.2" stroke="#bcbcbc" stroke-width="0.7"/></svg>
<svg style="left:55.4px;top:362.73px" width="10" height="10"><path d="M1 8.6V1H8V4.5" fill="none" stroke="#8ea4bc" stroke-width="0.75" stroke-dasharray="1.3,0.7"/><path d="M1.5 8.4H4" stroke="#8ea4bc" stroke-width="0.7"/><rect x="0.3" y="0.3" width="1.4" height="1.4" fill="#555"/><rect x="7.3" y="0.3" width="1.4" height="1.4" fill="#555"/><rect x="0.3" y="7.8" width="1.4" height="1.4" fill="#555"/><path d="M4.3 9.2L4.8 7.6L8.6 3.9L9.6 4.9L5.8 8.6Z" fill="#f0b040"/><path d="M4.3 9.2L4.8 7.6L5.8 8.6Z" fill="#7a7a7a"/></svg>
<div class="t" style="left:71.9px;top:365.00px;font-size:6.6px;color:#444;transform:scaleX(0.8729);transform-origin:0 0;-webkit-text-stroke:0.08px #444;">botton panel stop</div>
<div class="a" style="left:40.8px;top:375.00px;width:100.3px;height:10.5px;background:#f4f4f4"></div>
<svg style="left:42.20px;top:377.30px" width="9" height="6"><path d="M0.5 2.9Q4.3 -1.6 8.1 2.9Q4.3 7.4 0.5 2.9Z" fill="none" stroke="#bcbcbc" stroke-width="0.95"/><circle cx="4.3" cy="2.9" r="1.25" fill="none" stroke="#bcbcbc" stroke-width="0.9"/><path d="M2.6 5.6L6 0.2" stroke="#bcbcbc" stroke-width="0.7"/></svg>
<svg style="left:55.4px;top:375.59px" width="10" height="10"><path d="M1 8.6V1H8V4.5" fill="none" stroke="#8ea4bc" stroke-width="0.75" stroke-dasharray="1.3,0.7"/><path d="M1.5 8.4H4" stroke="#8ea4bc" stroke-width="0.7"/><rect x="0.3" y="0.3" width="1.4" height="1.4" fill="#555"/><rect x="7.3" y="0.3" width="1.4" height="1.4" fill="#555"/><rect x="0.3" y="7.8" width="1.4" height="1.4" fill="#555"/><path d="M4.3 9.2L4.8 7.6L8.6 3.9L9.6 4.9L5.8 8.6Z" fill="#f0b040"/><path d="M4.3 9.2L4.8 7.6L5.8 8.6Z" fill="#7a7a7a"/></svg>
<div class="t" style="left:71.9px;top:378.00px;font-size:6.6px;color:#444;transform:scaleX(0.8786);transform-origin:0 0;-webkit-text-stroke:0.08px #444;">bottom panel stop cutout</div>
<div class="a" style="left:40.8px;top:387.86px;width:75.0px;height:10.5px;background:#f4f4f4"></div>
<svg style="left:42.20px;top:390.16px" width="9" height="6"><path d="M0.5 2.9Q4.3 -1.6 8.1 2.9Q4.3 7.4 0.5 2.9Z" fill="none" stroke="#bcbcbc" stroke-width="0.95"/><circle cx="4.3" cy="2.9" r="1.25" fill="none" stroke="#bcbcbc" stroke-width="0.9"/><path d="M2.6 5.6L6 0.2" stroke="#bcbcbc" stroke-width="0.7"/></svg>
<svg style="left:55.4px;top:388.46px" width="10" height="10"><path d="M1 8.6V1H8V4.5" fill="none" stroke="#8ea4bc" stroke-width="0.75" stroke-dasharray="1.3,0.7"/><path d="M1.5 8.4H4" stroke="#8ea4bc" stroke-width="0.7"/><rect x="0.3" y="0.3" width="1.4" height="1.4" fill="#555"/><rect x="7.3" y="0.3" width="1.4" height="1.4" fill="#555"/><rect x="0.3" y="7.8" width="1.4" height="1.4" fill="#555"/><path d="M6 5.6V5Q7 3.6 8 5V5.6" fill="none" stroke="#b04040" stroke-width="0.8"/><path d="M4.9 6.2Q4.9 5.3 5.8 5.3H8.2Q9.1 5.3 9.1 6.2V8.4Q9.1 9.5 8 9.5H6Q4.9 9.5 4.9 8.4Z" fill="#c24848"/><rect x="6.6" y="6.5" width="0.9" height="1.6" fill="#f4d6d6"/></svg>
<div class="t" style="left:71.9px;top:391.00px;font-size:6.6px;color:#444;transform:scaleX(0.8678);transform-origin:0 0;-webkit-text-stroke:0.08px #444;">main slat decal</div>
<div class="a" style="left:40.8px;top:400.73px;width:59.3px;height:10.5px;background:#f4f4f4"></div>
<svg style="left:42.20px;top:403.03px" width="9" height="6"><path d="M0.5 2.9Q4.3 -1.6 8.1 2.9Q4.3 7.4 0.5 2.9Z" fill="none" stroke="#bcbcbc" stroke-width="0.95"/><circle cx="4.3" cy="2.9" r="1.25" fill="none" stroke="#bcbcbc" stroke-width="0.9"/><path d="M2.6 5.6L6 0.2" stroke="#bcbcbc" stroke-width="0.7"/></svg>
<svg style="left:55.4px;top:401.32px" width="10" height="10"><path d="M1 8.6V1H8V4.5" fill="none" stroke="#8ea4bc" stroke-width="0.75" stroke-dasharray="1.3,0.7"/><path d="M1.5 8.4H4" stroke="#8ea4bc" stroke-width="0.7"/><rect x="0.3" y="0.3" width="1.4" height="1.4" fill="#555"/><rect x="7.3" y="0.3" width="1.4" height="1.4" fill="#555"/><rect x="0.3" y="7.8" width="1.4" height="1.4" fill="#555"/><path d="M4.3 9.2L4.8 7.6L8.6 3.9L9.6 4.9L5.8 8.6Z" fill="#f0b040"/><path d="M4.3 9.2L4.8 7.6L5.8 8.6Z" fill="#7a7a7a"/></svg>
<div class="t" style="left:71.9px;top:403.00px;font-size:6.6px;color:#444;transform:scaleX(0.8520);transform-origin:0 0;-webkit-text-stroke:0.08px #444;">rail stops</div>
<div class="a" style="left:40.8px;top:413.59px;width:81.0px;height:10.5px;background:#f4f4f4"></div>
<svg style="left:42.20px;top:415.89px" width="9" height="6"><path d="M0.5 2.9Q4.3 -1.6 8.1 2.9Q4.3 7.4 0.5 2.9Z" fill="none" stroke="#bcbcbc" stroke-width="0.95"/><circle cx="4.3" cy="2.9" r="1.25" fill="none" stroke="#bcbcbc" stroke-width="0.9"/><path d="M2.6 5.6L6 0.2" stroke="#bcbcbc" stroke-width="0.7"/></svg>
<svg style="left:55.4px;top:414.19px" width="10" height="10"><path d="M1 8.6V1H8V4.5" fill="none" stroke="#8ea4bc" stroke-width="0.75" stroke-dasharray="1.3,0.7"/><path d="M1.5 8.4H4" stroke="#8ea4bc" stroke-width="0.7"/><rect x="0.3" y="0.3" width="1.4" height="1.4" fill="#555"/><rect x="7.3" y="0.3" width="1.4" height="1.4" fill="#555"/><rect x="0.3" y="7.8" width="1.4" height="1.4" fill="#555"/><path d="M4.3 9.2L4.8 7.6L8.6 3.9L9.6 4.9L5.8 8.6Z" fill="#f0b040"/><path d="M4.3 9.2L4.8 7.6L5.8 8.6Z" fill="#7a7a7a"/></svg>
<div class="t" style="left:71.9px;top:416.00px;font-size:6.6px;color:#444;transform:scaleX(0.8925);transform-origin:0 0;-webkit-text-stroke:0.08px #444;">Panel reinforcing</div>
<div class="a" style="left:40.8px;top:426.46px;width:75.9px;height:10.5px;background:#f4f4f4"></div>
<svg style="left:42.20px;top:428.76px" width="9" height="6"><path d="M0.5 2.9Q4.3 -1.6 8.1 2.9Q4.3 7.4 0.5 2.9Z" fill="none" stroke="#bcbcbc" stroke-width="0.95"/><circle cx="4.3" cy="2.9" r="1.25" fill="none" stroke="#bcbcbc" stroke-width="0.9"/><path d="M2.6 5.6L6 0.2" stroke="#bcbcbc" stroke-width="0.7"/></svg>
<svg style="left:55.4px;top:427.06px" width="10" height="10"><path d="M1 8.6V1H8V4.5" fill="none" stroke="#8ea4bc" stroke-width="0.75" stroke-dasharray="1.3,0.7"/><path d="M1.5 8.4H4" stroke="#8ea4bc" stroke-width="0.7"/><rect x="0.3" y="0.3" width="1.4" height="1.4" fill="#555"/><rect x="7.3" y="0.3" width="1.4" height="1.4" fill="#555"/><rect x="0.3" y="7.8" width="1.4" height="1.4" fill="#555"/><path d="M6 5.6V5Q7 3.6 8 5V5.6" fill="none" stroke="#b04040" stroke-width="0.8"/><path d="M4.9 6.2Q4.9 5.3 5.8 5.3H8.2Q9.1 5.3 9.1 6.2V8.4Q9.1 9.5 8 9.5H6Q4.9 9.5 4.9 8.4Z" fill="#c24848"/><rect x="6.6" y="6.5" width="0.9" height="1.6" fill="#f4d6d6"/></svg>
<div class="t" style="left:71.9px;top:429.00px;font-size:6.6px;color:#444;transform:scaleX(0.8393);transform-origin:0 0;-webkit-text-stroke:0.08px #444;">bottom slat stop</div>
<div class="a" style="left:40.8px;top:439.32px;width:61.7px;height:10.5px;background:#f4f4f4"></div>
<svg style="left:42.20px;top:441.62px" width="9" height="6"><path d="M0.5 2.9Q4.3 -1.6 8.1 2.9Q4.3 7.4 0.5 2.9Z" fill="none" stroke="#858585" stroke-width="0.95"/><circle cx="4.3" cy="2.9" r="1.25" fill="none" stroke="#858585" stroke-width="0.9"/></svg>
<svg style="left:55.4px;top:439.92px" width="10" height="10"><path d="M1 8.6V1H8V4.5" fill="none" stroke="#8ea4bc" stroke-width="0.75" stroke-dasharray="1.3,0.7"/><path d="M1.5 8.4H4" stroke="#8ea4bc" stroke-width="0.7"/><rect x="0.3" y="0.3" width="1.4" height="1.4" fill="#555"/><rect x="7.3" y="0.3" width="1.4" height="1.4" fill="#555"/><rect x="0.3" y="7.8" width="1.4" height="1.4" fill="#555"/><path d="M6 5.6V5Q7 3.6 8 5V5.6" fill="none" stroke="#b04040" stroke-width="0.8"/><path d="M4.9 6.2Q4.9 5.3 5.8 5.3H8.2Q9.1 5.3 9.1 6.2V8.4Q9.1 9.5 8 9.5H6Q4.9 9.5 4.9 8.4Z" fill="#c24848"/><rect x="6.6" y="6.5" width="0.9" height="1.6" fill="#f4d6d6"/></svg>
<div class="t" style="left:71.9px;top:442.00px;font-size:6.6px;color:#444;transform:scaleX(0.9049);transform-origin:0 0;-webkit-text-stroke:0.08px #444;">Sketch18</div>
<div class="a" style="left:31.2px;top:452.19px;width:69.8px;height:10.5px;background:#f4f4f4"></div>
<svg style="left:21.20px;top:453.49px" width="7" height="8"><path d="M0.7 0.7L5.1 3.8L0.7 6.9Z" fill="none" stroke="#606060" stroke-width="1" stroke-linejoin="round"/></svg>
<svg style="left:32.90px;top:454.49px" width="9" height="6"><path d="M0.5 2.9Q4.3 -1.6 8.1 2.9Q4.3 7.4 0.5 2.9Z" fill="none" stroke="#858585" stroke-width="0.95"/><circle cx="4.3" cy="2.9" r="1.25" fill="none" stroke="#858585" stroke-width="0.9"/></svg>
<svg style="left:46px;top:453.58px" width="9" height="8"><path d="M0 0.5H3L4 1.5H8.5V7.5H0Z" fill="#8a8a8a"/><path d="M0 2.2H8.5" stroke="#a9a9a9" stroke-width="0.5"/></svg>
<div class="t" style="left:62.3px;top:455.00px;font-size:6.6px;color:#444;transform:scaleX(0.8907);transform-origin:0 0;-webkit-text-stroke:0.08px #444;">Construction</div>
<svg style="left:0;top:0" width="1024" height="539">
<path d="M336 347L406 325" stroke="#d4d4d4" stroke-width="2.8" stroke-linecap="round"/>
<path d="M423 420.5L556 376" stroke="#d4d4d4" stroke-width="2.8" stroke-linecap="round"/>
<path d="M281.9 300H288.2V364.2L284 365L281.9 363.5Z" fill="#606262"/>
<path d="M283.4 300V363" stroke="#7c7e7e" stroke-width="1.2"/>
<path d="M281.9 300V364" stroke="#3a3a3a" stroke-width="0.7"/>
<path d="M282 358.5H288" stroke="#3a3a3a" stroke-width="0.6"/>
<path d="M288 322L405.8 375V422.6L288 364.7Z" fill="#777776"/>
<path d="M288 325L405.8 378V393.4L385.6 384.2L382.2 377.6L311.9 343.6L308.6 346.9L288 337.5Z" fill="#7b7b7a"/>
<path d="M288 322L405.8 375" stroke="#333" stroke-width="1.3"/>
<path d="M290 325.3L405.8 377.6" stroke="#2e2e2e" stroke-width="0.9"/>
<path d="M288 323.6L405.8 376.3" stroke="#8a8a8a" stroke-width="0.6"/>
<path d="M288 337.5L308.6 346.9L311.9 343.6L382.2 377.6L385.6 384.2L405.8 393.4" fill="none" stroke="#1a1a1a" stroke-width="1.35" stroke-linejoin="round"/>
<path d="M288 343.5L405.8 399.3" stroke="#1a1a1a" stroke-width="1.35"/>
<path d="M288 360.3L308.6 370.3L311.9 366.9L382.2 400.9L385.6 407.6L405.8 416.8" fill="none" stroke="#1a1a1a" stroke-width="1.35" stroke-linejoin="round"/>
<path d="M288 364.7L405.8 422.6" stroke="#333" stroke-width="1.1"/>
<path d="M288 322V364.7" stroke="#3a3a3a" stroke-width="0.8"/>
<rect x="-9" y="-3.6" width="18" height="7.2" rx="3.6" transform="translate(347.4 383.8) rotate(27)" fill="#f8f8f8" stroke="#1a1a1a" stroke-width="1"/>
<path d="M308.3 327.6Q308.8 324.3 311 324.4Q312.7 324.8 312.2 328.2" fill="none" stroke="#222" stroke-width="1.2"/>
<path d="M393.7 369.8Q394.2 366.5 396.4 366.6Q398.1 367 397.6 370.4" fill="none" stroke="#222" stroke-width="1.2"/>
<path d="M405.6 300H424V419.5L406 426Z" fill="#5f6464"/>
<path d="M406.6 300V425.3" stroke="#8a8e8e" stroke-width="1.4"/>
<path d="M405.6 300V426" stroke="#3b3f3f" stroke-width="0.6"/>
<path d="M424 300V419.5" stroke="#4a4e4e" stroke-width="0.8"/>
<path d="M406 426L424 419.5" stroke="#3b3f3f" stroke-width="0.8"/>
</svg>
<svg style="left:960px;top:66px" width="64" height="60">
<defs><linearGradient id="vc" x1="0" y1="0" x2="0" y2="1"><stop offset="0" stop-color="#f2f2f2"/><stop offset="1" stop-color="#e2e2e2"/></linearGradient>
<radialGradient id="vsh" cx="0.5" cy="0.5" r="0.5"><stop offset="0" stop-color="#000" stop-opacity="0.10"/><stop offset="1" stop-color="#000" stop-opacity="0"/></radialGradient></defs>
<ellipse cx="33" cy="47" rx="22" ry="7" fill="url(#vsh)"/>
<path d="M13.4 15.6L27.8 22.8V49L13.4 40Z" fill="#ebebeb"/>
<path d="M27.8 22.8L47.9 17.8V40L27.8 49Z" fill="#e4e4e4"/>
<path d="M13.4 15.6L32.3 11.1L47.9 17.8L27.8 22.8Z" fill="#f3f3f3"/>
<path d="M13.4 15.6L32.3 11.1L47.9 17.8L27.8 22.8ZM27.8 22.8V49M13.4 15.6V40L27.8 49L47.9 40V17.8" fill="none" stroke="#9c9c9c" stroke-width="0.75" stroke-dasharray="1.7,1"/>
<path d="M11.7 12.2V38.4" stroke="#7a80cc" stroke-width="0.7"/>
<path d="M11.7 38.4L30.6 50.7" stroke="#e89090" stroke-width="0.8"/>
<text x="8.2" y="10.6" font-size="6.6" fill="#6a70c4" font-family="Liberation Sans">Z</text>
<text x="31.5" y="55.7" font-size="6" fill="#e07878" font-family="Liberation Sans">X</text>
<text x="0" y="0" font-size="5.6" fill="#8c8c8c" font-family="Liberation Sans" transform="translate(14.3 31.3) skewY(26.6) scale(0.59 1)" stroke="#8c8c8c" stroke-width="0.25">FRONT</text>
<text x="0" y="0" font-size="5.6" fill="#8c8c8c" font-family="Liberation Sans" transform="translate(32 37.3) skewY(-22) scale(0.75 1)" stroke="#8c8c8c" stroke-width="0.25">RIGHT</text>
<text x="0" y="0" font-size="4" fill="#999" font-family="Liberation Sans" transform="translate(26 16.5) rotate(25) scale(0.8 1)">TOP</text>
</svg>
<div class="a" style="left:220.4px;top:68px;width:644.5px;height:254.5px;background:#f0f0f0;border:1.3px solid #a2a2a2;box-shadow:0 2px 9px rgba(0,0,0,0.20)"></div>
<div class="a" style="left:221.4px;top:69px;width:642.5px;height:15px;background:#ffffff"></div>
<div class="t" style="left:225.8px;top:74.00px;font-size:6.3px;color:#1a1a1a;transform:scaleX(0.9583);transform-origin:0 0;-webkit-text-stroke:0.12px #222;">Parameters</div>
<svg style="left:852.5px;top:72.5px" width="8" height="8"><path d="M0.7 0.7L6.9 6.9M6.9 0.7L0.7 6.9" stroke="#333" stroke-width="0.85"/></svg>
<div class="a" style="left:227.3px;top:90.4px;width:631px;height:210px;background:#fff;border:1.2px solid #b4b4b4"></div>
<div class="t" style="left:230.1px;top:95.00px;font-size:6.8px;color:#111;font-weight:bold;transform:scaleX(1.0371);transform-origin:0 0;-webkit-text-stroke:0.12px #222;">Parameter</div>
<div class="t" style="left:353.3px;top:95.00px;font-size:6.8px;color:#111;font-weight:bold;transform:scaleX(1.0097);transform-origin:0 0;-webkit-text-stroke:0.12px #222;">Name</div>
<div class="t" style="left:417.4px;top:95.00px;font-size:6.8px;color:#111;font-weight:bold;transform:scaleX(1.0743);transform-origin:0 0;-webkit-text-stroke:0.12px #222;">Unit</div>
<div class="t" style="left:455px;top:95.00px;font-size:6.8px;color:#111;font-weight:bold;transform:scaleX(0.9875);transform-origin:0 0;-webkit-text-stroke:0.12px #222;">Expression</div>
<div class="t" style="left:664.3px;top:95.00px;font-size:6.8px;color:#111;font-weight:bold;transform:scaleX(1.0357);transform-origin:0 0;-webkit-text-stroke:0.12px #222;">Value</div>
<div class="t" style="left:760.8px;top:95.00px;font-size:6.8px;color:#111;font-weight:bold;transform:scaleX(1.0046);transform-origin:0 0;-webkit-text-stroke:0.12px #222;">Comments</div>
<div class="a" style="left:350.5px;top:91.4px;width:0.7px;height:12px;background:#e6e6e6"></div>
<div class="a" style="left:415.4px;top:91.4px;width:0.7px;height:12px;background:#e6e6e6"></div>
<div class="a" style="left:452.7px;top:91.4px;width:0.7px;height:12px;background:#e6e6e6"></div>
<div class="a" style="left:661.8px;top:91.4px;width:0.7px;height:12px;background:#e6e6e6"></div>
<div class="a" style="left:758.4px;top:91.4px;width:0.7px;height:12px;background:#e6e6e6"></div>
<div class="a" style="left:238.4px;top:103.2px;width:618.6px;height:10.0px;background:#d2d2d2"></div>
<div class="a" style="left:350.5px;top:103.2px;width:0.7px;height:10.0px;background:#c4c4c4"></div>
<div class="a" style="left:415.4px;top:103.2px;width:0.7px;height:10.0px;background:#c4c4c4"></div>
<div class="a" style="left:452.7px;top:103.2px;width:0.7px;height:10.0px;background:#c4c4c4"></div>
<div class="a" style="left:661.8px;top:103.2px;width:0.7px;height:10.0px;background:#c4c4c4"></div>
<div class="a" style="left:758.4px;top:103.2px;width:0.7px;height:10.0px;background:#c4c4c4"></div>
<div class="a" style="left:238.4px;top:113.2px;width:619px;height:0.6px;background:#c9c9c9"></div>
<div class="a" style="left:238.4px;top:113.8px;width:618.6px;height:10.1px;background:#d2d2d2"></div>
<div class="a" style="left:350.5px;top:113.8px;width:0.7px;height:10.1px;background:#c4c4c4"></div>
<div class="a" style="left:415.4px;top:113.8px;width:0.7px;height:10.1px;background:#c4c4c4"></div>
<div class="a" style="left:452.7px;top:113.8px;width:0.7px;height:10.1px;background:#c4c4c4"></div>
<div class="a" style="left:661.8px;top:113.8px;width:0.7px;height:10.1px;background:#c4c4c4"></div>
<div class="a" style="left:758.4px;top:113.8px;width:0.7px;height:10.1px;background:#c4c4c4"></div>
<div class="a" style="left:238.4px;top:167.3px;width:618.6px;height:10.3px;background:#d2d2d2"></div>
<div class="a" style="left:350.5px;top:167.3px;width:0.7px;height:10.3px;background:#c4c4c4"></div>
<div class="a" style="left:415.4px;top:167.3px;width:0.7px;height:10.3px;background:#c4c4c4"></div>
<div class="a" style="left:452.7px;top:167.3px;width:0.7px;height:10.3px;background:#c4c4c4"></div>
<div class="a" style="left:661.8px;top:167.3px;width:0.7px;height:10.3px;background:#c4c4c4"></div>
<div class="a" style="left:758.4px;top:167.3px;width:0.7px;height:10.3px;background:#c4c4c4"></div>
<div class="t" style="left:240.1px;top:106.00px;font-size:6.9px;color:#222;transform:scaleX(0.8776);transform-origin:0 0;-webkit-text-stroke:0.12px #222;">Favorites</div>
<div class="t" style="left:240.1px;top:117.00px;font-size:6.9px;color:#222;transform:scaleX(0.8476);transform-origin:0 0;-webkit-text-stroke:0.12px #222;">User Parameters</div>
<div class="t" style="left:240.1px;top:170.00px;font-size:6.9px;color:#222;transform:scaleX(0.8817);transform-origin:0 0;-webkit-text-stroke:0.12px #222;">Model Parameters</div>
<svg style="left:230.3px;top:117.2px" width="6" height="4"><path d="M0.5 0.5L2.7 2.8L4.9 0.5" fill="none" stroke="#333" stroke-width="0.9"/></svg>
<svg style="left:231.5px;top:170px" width="4" height="6"><path d="M0.6 0.6L2.9 2.8L0.6 5" fill="none" stroke="#999" stroke-width="0.7"/></svg>
<svg style="left:340.2px;top:115.5px" width="7" height="7"><path d="M3.1 0.3V5.9M0.3 3.1H5.9" stroke="#555" stroke-width="0.75"/></svg>
<div class="a" style="left:249.5px;top:134.50px;width:608px;height:0.7px;background:#ebebeb"></div>
<div class="a" style="left:249.5px;top:124.4px;width:0.7px;height:10.7px;background:#ebebeb"></div>
<div class="a" style="left:350.5px;top:124.4px;width:0.7px;height:10.7px;background:#ebebeb"></div>
<div class="a" style="left:415.4px;top:124.4px;width:0.7px;height:10.7px;background:#ebebeb"></div>
<div class="a" style="left:452.7px;top:124.4px;width:0.7px;height:10.7px;background:#ebebeb"></div>
<div class="a" style="left:661.8px;top:124.4px;width:0.7px;height:10.7px;background:#ebebeb"></div>
<div class="a" style="left:758.4px;top:124.4px;width:0.7px;height:10.7px;background:#ebebeb"></div>
<svg style="left:250.2px;top:125.00px" width="10" height="10"><path d="M4.7 0.5L5.9 3.3L8.9 3.5L6.6 5.5L7.3 8.6L4.7 7L2.1 8.6L2.8 5.5L0.5 3.5L3.5 3.3Z" fill="#fff" stroke="#3a3a3a" stroke-width="0.7" stroke-linejoin="round"/></svg>
<div class="t" style="left:262.8px;top:128.00px;font-size:7.1px;color:#222;transform:scaleX(0.8582);transform-origin:0 0;-webkit-text-stroke:0.12px #222;">User Parameter</div>
<div class="t" style="left:352.9px;top:128.00px;font-size:7.1px;color:#222;transform:scaleX(0.8868);transform-origin:0 0;-webkit-text-stroke:0.12px #222;">Depth</div>
<div class="t" style="left:417.4px;top:128.00px;font-size:7.1px;color:#222;transform:scaleX(0.9553);transform-origin:0 0;-webkit-text-stroke:0.12px #222;">mm</div>
<div class="t" style="left:455px;top:128.00px;font-size:7.1px;color:#222;transform:scaleX(0.8579);transform-origin:0 0;-webkit-text-stroke:0.12px #222;">155 mm</div>
<div class="t" style="left:663.4px;top:128.00px;font-size:7.1px;color:#222;transform:scaleX(0.8013);transform-origin:0 0;-webkit-text-stroke:0.12px #222;">155.00</div>
<div class="a" style="left:249.5px;top:145.22px;width:608px;height:0.7px;background:#ebebeb"></div>
<div class="a" style="left:249.5px;top:135.12px;width:0.7px;height:10.7px;background:#ebebeb"></div>
<div class="a" style="left:350.5px;top:135.12px;width:0.7px;height:10.7px;background:#ebebeb"></div>
<div class="a" style="left:415.4px;top:135.12px;width:0.7px;height:10.7px;background:#ebebeb"></div>
<div class="a" style="left:452.7px;top:135.12px;width:0.7px;height:10.7px;background:#ebebeb"></div>
<div class="a" style="left:661.8px;top:135.12px;width:0.7px;height:10.7px;background:#ebebeb"></div>
<div class="a" style="left:758.4px;top:135.12px;width:0.7px;height:10.7px;background:#ebebeb"></div>
<svg style="left:250.2px;top:135.72px" width="10" height="10"><path d="M4.7 0.5L5.9 3.3L8.9 3.5L6.6 5.5L7.3 8.6L4.7 7L2.1 8.6L2.8 5.5L0.5 3.5L3.5 3.3Z" fill="#fff" stroke="#3a3a3a" stroke-width="0.7" stroke-linejoin="round"/></svg>
<div class="t" style="left:262.8px;top:139.00px;font-size:7.1px;color:#222;transform:scaleX(0.8582);transform-origin:0 0;-webkit-text-stroke:0.12px #222;">User Parameter</div>
<div class="t" style="left:352.9px;top:139.00px;font-size:7.1px;color:#222;transform:scaleX(0.9257);transform-origin:0 0;-webkit-text-stroke:0.12px #222;">Width</div>
<div class="t" style="left:417.4px;top:139.00px;font-size:7.1px;color:#222;transform:scaleX(0.9553);transform-origin:0 0;-webkit-text-stroke:0.12px #222;">mm</div>
<div class="t" style="left:455px;top:139.00px;font-size:7.1px;color:#222;transform:scaleX(0.8579);transform-origin:0 0;-webkit-text-stroke:0.12px #222;">161 mm</div>
<div class="t" style="left:663.4px;top:139.00px;font-size:7.1px;color:#222;transform:scaleX(0.8013);transform-origin:0 0;-webkit-text-stroke:0.12px #222;">161.00</div>
<div class="a" style="left:249.5px;top:155.94px;width:608px;height:0.7px;background:#ebebeb"></div>
<div class="a" style="left:249.5px;top:145.84px;width:0.7px;height:10.7px;background:#ebebeb"></div>
<div class="a" style="left:350.5px;top:145.84px;width:0.7px;height:10.7px;background:#ebebeb"></div>
<div class="a" style="left:415.4px;top:145.84px;width:0.7px;height:10.7px;background:#ebebeb"></div>
<div class="a" style="left:452.7px;top:145.84px;width:0.7px;height:10.7px;background:#ebebeb"></div>
<div class="a" style="left:661.8px;top:145.84px;width:0.7px;height:10.7px;background:#ebebeb"></div>
<div class="a" style="left:758.4px;top:145.84px;width:0.7px;height:10.7px;background:#ebebeb"></div>
<svg style="left:250.2px;top:146.44px" width="10" height="10"><path d="M4.7 0.5L5.9 3.3L8.9 3.5L6.6 5.5L7.3 8.6L4.7 7L2.1 8.6L2.8 5.5L0.5 3.5L3.5 3.3Z" fill="#fff" stroke="#3a3a3a" stroke-width="0.7" stroke-linejoin="round"/></svg>
<div class="t" style="left:262.8px;top:149.00px;font-size:7.1px;color:#222;transform:scaleX(0.8582);transform-origin:0 0;-webkit-text-stroke:0.12px #222;">User Parameter</div>
<div class="t" style="left:352.9px;top:149.00px;font-size:7.1px;color:#222;transform:scaleX(0.9258);transform-origin:0 0;-webkit-text-stroke:0.12px #222;">Height</div>
<div class="t" style="left:417.4px;top:149.00px;font-size:7.1px;color:#222;transform:scaleX(0.9553);transform-origin:0 0;-webkit-text-stroke:0.12px #222;">mm</div>
<div class="t" style="left:455px;top:149.00px;font-size:7.1px;color:#222;transform:scaleX(0.8579);transform-origin:0 0;-webkit-text-stroke:0.12px #222;">150 mm</div>
<div class="t" style="left:663.4px;top:149.00px;font-size:7.1px;color:#222;transform:scaleX(0.8013);transform-origin:0 0;-webkit-text-stroke:0.12px #222;">150.00</div>
<div class="a" style="left:249.5px;top:166.66px;width:608px;height:0.7px;background:#ebebeb"></div>
<div class="a" style="left:249.5px;top:156.56px;width:0.7px;height:10.7px;background:#ebebeb"></div>
<div class="a" style="left:350.5px;top:156.56px;width:0.7px;height:10.7px;background:#ebebeb"></div>
<div class="a" style="left:415.4px;top:156.56px;width:0.7px;height:10.7px;background:#ebebeb"></div>
<div class="a" style="left:452.7px;top:156.56px;width:0.7px;height:10.7px;background:#ebebeb"></div>
<div class="a" style="left:661.8px;top:156.56px;width:0.7px;height:10.7px;background:#ebebeb"></div>
<div class="a" style="left:758.4px;top:156.56px;width:0.7px;height:10.7px;background:#ebebeb"></div>
<svg style="left:250.2px;top:157.16px" width="10" height="10"><path d="M4.7 0.5L5.9 3.3L8.9 3.5L6.6 5.5L7.3 8.6L4.7 7L2.1 8.6L2.8 5.5L0.5 3.5L3.5 3.3Z" fill="#fff" stroke="#3a3a3a" stroke-width="0.7" stroke-linejoin="round"/></svg>
<div class="t" style="left:262.8px;top:160.00px;font-size:7.1px;color:#222;transform:scaleX(0.8582);transform-origin:0 0;-webkit-text-stroke:0.12px #222;">User Parameter</div>
<div class="t" style="left:352.9px;top:160.00px;font-size:7.1px;color:#222;transform:scaleX(0.9922);transform-origin:0 0;-webkit-text-stroke:0.12px #222;">pin</div>
<div class="t" style="left:417.4px;top:160.00px;font-size:7.1px;color:#222;transform:scaleX(0.9553);transform-origin:0 0;-webkit-text-stroke:0.12px #222;">mm</div>
<div class="t" style="left:455px;top:160.00px;font-size:7.1px;color:#222;transform:scaleX(0.9127);transform-origin:0 0;-webkit-text-stroke:0.12px #222;">3 mm</div>
<div class="t" style="left:663.4px;top:160.00px;font-size:7.1px;color:#222;transform:scaleX(0.8178);transform-origin:0 0;-webkit-text-stroke:0.12px #222;">3.00</div>
<div class="t" style="left:760.1px;top:160.00px;font-size:7.1px;color:#222;transform:scaleX(0.9300);transform-origin:0 0;-webkit-text-stroke:0.12px #222;">guide pin</div>
<div class="a" style="left:818.7px;top:303.7px;width:39.3px;height:11.7px;background:#e1e1e1;border:1px solid #3c7fc4"></div>
<div class="t" style="left:833.5px;top:307.00px;font-size:6.2px;color:#111;transform:scaleX(0.9377);transform-origin:0 0;-webkit-text-stroke:0.12px #222;">OK</div>
<div class="a" style="left:2px;top:497px;width:161px;height:12.5px;background:#f1f1f1;border:1px solid #dfdfdf"></div>
<div class="t" style="left:15.8px;top:501.00px;font-size:5.9px;color:#777;transform:scaleX(0.8775);transform-origin:0 0;">COMMENTS</div>
<svg style="left:151px;top:500.5px" width="6" height="6"><circle cx="2.7" cy="2.7" r="2.6" fill="#333"/><path d="M1.5 2.7H3.9M2.7 1.5V3.9" stroke="#eee" stroke-width="0.8"/></svg>
<svg style="left:159.5px;top:501px" width="3" height="5"><path d="M0 0L2 2.5L0 5Z" fill="#999"/></svg>
<div class="a" style="left:448.8px;top:496.6px;width:126.6px;height:13.2px;background:#f0f0f0"></div>
<svg style="left:0px;top:0px" width="1024" height="539">
<g transform="translate(450.2 498.8)">
<path d="M4.4 0.8V8M0.8 4.4H8" stroke="#333" stroke-width="0.9"/><path d="M4.4 0L5.6 1.6H3.2Z M4.4 8.8L5.6 7.2H3.2Z M0 4.4L1.6 3.2V5.6Z M8.8 4.4L7.2 3.2V5.6Z" fill="#333"/><ellipse cx="4.4" cy="4.8" rx="3.6" ry="1.6" fill="none" stroke="#555" stroke-width="0.7"/>
</g>
<path d="M461.5 502.6H464L462.75 504.1Z" fill="#333"/>
<g transform="translate(467.1 499.5)">
<rect x="0.5" y="2.3" width="8.5" height="5.5" rx="0.8" fill="#d0d0d0" stroke="#6a6a6a" stroke-width="0.8"/><path d="M1.5 2.3L2.5 0.5H7L8 2.3" fill="#e0e0e0" stroke="#6a6a6a" stroke-width="0.7"/><path d="M2 5H7.5" stroke="#777" stroke-width="0.6"/>
</g>
<g transform="translate(481.7 498.8)">
<path d="M3 8.8Q0.8 7 0.5 4.8Q0.6 3.8 1.6 4.4L2.3 5.3V1.6Q2.5 0.8 3.2 1.2V0.8Q3.8 0.1 4.5 0.8Q5.3 0.2 5.8 1V1.3Q6.6 0.9 7 1.7V5Q8 4.4 8.5 5.1Q8 7.2 6.8 8.8Z" fill="#fafafa" stroke="#5a5a5a" stroke-width="0.75"/><path d="M3.2 1.2V4.2M4.5 0.8V4M5.8 1.3V4" stroke="#777" stroke-width="0.5"/>
</g>
<g transform="translate(495.3 499)">
<circle cx="3.5" cy="4.3" r="2.8" fill="#fff" stroke="#3a3a3a" stroke-width="0.9"/><path d="M5.5 6.3L7.8 8.6" stroke="#2a2a2a" stroke-width="1.3"/><path d="M6.8 1.5H9.2M8 0.3V2.7" stroke="#555" stroke-width="0.7"/>
</g>
<g transform="translate(509.1 498.8)">
<path d="M0.4 2.5V0.4H2.5M6 0.4H8.1V2.5M0.4 6V8.1H2.5" fill="none" stroke="#888" stroke-width="0.5" stroke-dasharray="0.8,0.5"/><circle cx="4" cy="4" r="3" fill="#fff" stroke="#444" stroke-width="0.9"/><path d="M6.1 6.1L8.8 8.8" stroke="#2a2a2a" stroke-width="1.3"/>
</g>
<path d="M521.5 502.6H524L522.75 504.1Z" fill="#333"/>
<g transform="translate(527.1 499)">
<rect x="0.4" y="0.4" width="8.4" height="6.4" fill="#8ca2cc" stroke="#5c6a86" stroke-width="0.8"/><path d="M3 8.3H6.2" stroke="#555" stroke-width="1"/><path d="M4.6 6.8V8" stroke="#555" stroke-width="0.8"/>
</g>
<path d="M537.5 502.6H540L538.75 504.1Z" fill="#333"/>
<g transform="translate(543.7 498.8)">
<defs><linearGradient id="gsq" x1="0" y1="0" x2="1" y2="1"><stop offset="0" stop-color="#b8b8b8"/><stop offset="1" stop-color="#7e7e7e"/></linearGradient></defs>
<rect x="0.3" y="0.3" width="8.6" height="8.6" fill="url(#gsq)" stroke="#888" stroke-width="0.5"/>
</g>
<path d="M554.5 502.6H557L555.75 504.1Z" fill="#333"/>
<g transform="translate(560 499.3)">
<rect x="0" y="0" width="8.8" height="7.8" rx="0.9" fill="#6f90c6"/><path d="M4.4 0.5V7.3M0.5 3.9H8.3" stroke="#e8eef8" stroke-width="0.9"/>
</g>
<path d="M570.6 502.6H573.1L571.85 504.1Z" fill="#333"/>
</svg>
<div class="a" style="left:0;top:512px;width:1024px;height:27px;background:#f1f1f1;border-top:1px solid #d2d2d2"></div>
<div class="a" style="left:0;top:513px;width:1024px;height:2px;background:#f5f5f5"></div>
<svg style="left:0;top:512px" width="80" height="27">
<path d="M6 10V19" stroke="#333" stroke-width="1.1"/><path d="M13 10L7 14.5L13 19Z" fill="#333"/>
<path d="M18.8 14.5L23 11.2V17.8Z" fill="#333"/><path d="M23 12.3L25.8 14.5L23 16.7Z" fill="#666"/>
<path d="M32.5 10V19L39.5 14.5Z" fill="#333"/>
<path d="M51.6 14.5L47.4 11.2V17.8Z" fill="#333"/><path d="M47.4 12.3L45 14.5L47.4 16.7Z" fill="#666"/>
<path d="M59 10L65 14.5L59 19Z" fill="#333"/><path d="M66 10V19" stroke="#333" stroke-width="1.1"/>
</svg>
<svg style="left:77.80px;top:521px" width="10" height="10"><path d="M0.6 0.8H8.1V5.2M0.6 0.8V8.3H4.6" fill="none" stroke="#8c8c8c" stroke-width="0.8"/><path d="M1.3 1.5H7.4" stroke="#c9c9c9" stroke-width="0.5"/><rect x="0" y="0.2" width="1.3" height="1.3" fill="#6a6a6a"/><rect x="7.5" y="0.2" width="1.3" height="1.3" fill="#6a6a6a"/><rect x="0" y="7.6" width="1.3" height="1.3" fill="#6a6a6a"/><path d="M4.5 8.9L5 7.5L8.3 4.3L9.2 5.2L5.9 8.4Z" fill="#f2b84a"/><path d="M8.3 4.3L8.8 3.8L9.7 4.7L9.2 5.2Z" fill="#d06040"/></svg>
<div class="a" style="left:82.00px;top:532.5px;width:0.6px;height:1.8px;background:#aaa"></div>
<svg style="left:90.68px;top:521px" width="10" height="10"><path d="M0.6 0.8H8.1V5.2M0.6 0.8V8.3H4.6" fill="none" stroke="#8c8c8c" stroke-width="0.8"/><path d="M1.3 1.5H7.4" stroke="#c9c9c9" stroke-width="0.5"/><rect x="0" y="0.2" width="1.3" height="1.3" fill="#6a6a6a"/><rect x="7.5" y="0.2" width="1.3" height="1.3" fill="#6a6a6a"/><rect x="0" y="7.6" width="1.3" height="1.3" fill="#6a6a6a"/><path d="M4.5 8.9L5 7.5L8.3 4.3L9.2 5.2L5.9 8.4Z" fill="#f2b84a"/><path d="M8.3 4.3L8.8 3.8L9.7 4.7L9.2 5.2Z" fill="#d06040"/></svg>
<div class="a" style="left:94.88px;top:532.5px;width:0.6px;height:1.8px;background:#aaa"></div>
<svg style="left:103.56px;top:521px" width="10" height="10"><path d="M1 3Q4.5 -0.5 8.5 3V7Q4.5 4 1 7Z" fill="#5b9fd6"/><ellipse cx="4.8" cy="6.5" rx="2.3" ry="1.8" fill="#fff" stroke="#5b9fd6" stroke-width="1.2"/><path d="M1 3Q4.5 0 8.5 3" fill="none" stroke="#8cc3ec" stroke-width="1"/></svg>
<div class="a" style="left:107.76px;top:532.5px;width:0.6px;height:1.8px;background:#aaa"></div>
<svg style="left:116.44px;top:521px" width="10" height="10"><path d="M0.6 0.8H8.1V5.2M0.6 0.8V8.3H4.6" fill="none" stroke="#8c8c8c" stroke-width="0.8"/><path d="M1.3 1.5H7.4" stroke="#c9c9c9" stroke-width="0.5"/><rect x="0" y="0.2" width="1.3" height="1.3" fill="#6a6a6a"/><rect x="7.5" y="0.2" width="1.3" height="1.3" fill="#6a6a6a"/><rect x="0" y="7.6" width="1.3" height="1.3" fill="#6a6a6a"/><path d="M4.5 8.9L5 7.5L8.3 4.3L9.2 5.2L5.9 8.4Z" fill="#f2b84a"/><path d="M8.3 4.3L8.8 3.8L9.7 4.7L9.2 5.2Z" fill="#d06040"/></svg>
<div class="a" style="left:120.64px;top:532.5px;width:0.6px;height:1.8px;background:#aaa"></div>
<svg style="left:129.32px;top:521px" width="10" height="10"><path d="M0.3 2L2 0.3H7.5V7L5.8 8.7H0.3Z" fill="#5b9fd6"/><path d="M0.3 2L2 0.3H7.5L5.8 2Z" fill="#8cc3ec"/><path d="M5.8 2L7.5 0.3V7L5.8 8.7Z" fill="#3e7fb8"/><path d="M0.3 8.2H5.8" stroke="#c6d6e3" stroke-width="0.8"/><path d="M9.2 1.2V8" stroke="#222" stroke-width="0.75"/></svg>
<div class="a" style="left:133.52px;top:532.5px;width:0.6px;height:1.8px;background:#aaa"></div>
<svg style="left:142.20px;top:521px" width="10" height="10"><path d="M0.6 0.8H8.1V5.2M0.6 0.8V8.3H4.6" fill="none" stroke="#8c8c8c" stroke-width="0.8"/><path d="M1.3 1.5H7.4" stroke="#c9c9c9" stroke-width="0.5"/><rect x="0" y="0.2" width="1.3" height="1.3" fill="#6a6a6a"/><rect x="7.5" y="0.2" width="1.3" height="1.3" fill="#6a6a6a"/><rect x="0" y="7.6" width="1.3" height="1.3" fill="#6a6a6a"/><path d="M4.5 8.9L5 7.5L8.3 4.3L9.2 5.2L5.9 8.4Z" fill="#f2b84a"/><path d="M8.3 4.3L8.8 3.8L9.7 4.7L9.2 5.2Z" fill="#d06040"/></svg>
<div class="a" style="left:146.40px;top:532.5px;width:0.6px;height:1.8px;background:#aaa"></div>
<svg style="left:155.08px;top:521px" width="10" height="10"><path d="M0.3 2L2 0.3H7.5V7L5.8 8.7H0.3Z" fill="#5b9fd6"/><path d="M0.3 2L2 0.3H7.5L5.8 2Z" fill="#8cc3ec"/><path d="M5.8 2L7.5 0.3V7L5.8 8.7Z" fill="#3e7fb8"/><path d="M0.3 8.2H5.8" stroke="#c6d6e3" stroke-width="0.8"/><path d="M9.2 1.2V8" stroke="#222" stroke-width="0.75"/></svg>
<div class="a" style="left:159.28px;top:532.5px;width:0.6px;height:1.8px;background:#aaa"></div>
<svg style="left:167.96px;top:521px" width="10" height="10"><path d="M0.5 3L2.5 0.5H5.5V7L3.5 9H0.5Z" fill="#eef3ee" stroke="#7a9a7a" stroke-width="0.6"/><path d="M3 3L5 0.8V7L3 9Z" fill="#6cbc7c"/><path d="M6.5 3.5L9 0.8V6.5L6.5 9Z" fill="#d8a070"/></svg>
<div class="a" style="left:172.16px;top:532.5px;width:0.6px;height:1.8px;background:#aaa"></div>
<svg style="left:180.84px;top:521px" width="10" height="10"><path d="M0.6 0.8H8.1V5.2M0.6 0.8V8.3H4.6" fill="none" stroke="#8c8c8c" stroke-width="0.8"/><path d="M1.3 1.5H7.4" stroke="#c9c9c9" stroke-width="0.5"/><rect x="0" y="0.2" width="1.3" height="1.3" fill="#6a6a6a"/><rect x="7.5" y="0.2" width="1.3" height="1.3" fill="#6a6a6a"/><rect x="0" y="7.6" width="1.3" height="1.3" fill="#6a6a6a"/><path d="M4.5 8.9L5 7.5L8.3 4.3L9.2 5.2L5.9 8.4Z" fill="#f2b84a"/><path d="M8.3 4.3L8.8 3.8L9.7 4.7L9.2 5.2Z" fill="#d06040"/></svg>
<div class="a" style="left:185.04px;top:532.5px;width:0.6px;height:1.8px;background:#aaa"></div>
<svg style="left:193.72px;top:521px" width="10" height="10"><path d="M0.3 2L2 0.3H7.5V7L5.8 8.7H0.3Z" fill="#5b9fd6"/><path d="M0.3 2L2 0.3H7.5L5.8 2Z" fill="#8cc3ec"/><path d="M5.8 2L7.5 0.3V7L5.8 8.7Z" fill="#3e7fb8"/><path d="M0.3 8.2H5.8" stroke="#c6d6e3" stroke-width="0.8"/><path d="M9.2 1.2V8" stroke="#222" stroke-width="0.75"/></svg>
<div class="a" style="left:197.92px;top:532.5px;width:0.6px;height:1.8px;background:#aaa"></div>
<svg style="left:206.60px;top:521px" width="10" height="10"><circle cx="2.5" cy="2.3" r="1.9" fill="none" stroke="#777" stroke-width="0.7"/><rect x="0.8" y="5" width="3" height="3" fill="#8aa0b8" stroke="#666" stroke-width="0.5"/><circle cx="6.8" cy="6.5" r="2.4" fill="none" stroke="#777" stroke-width="0.7"/></svg>
<div class="a" style="left:210.80px;top:532.5px;width:0.6px;height:1.8px;background:#aaa"></div>
<svg style="left:219.48px;top:521px" width="10" height="10"><path d="M4.5 0.8V8.2M0.8 4.5H8.2" stroke="#222" stroke-width="0.9"/><path d="M4.5 0L6 1.8H3Z M4.5 9L6 7.2H3Z M0 4.5L1.8 3V6Z M9 4.5L7.2 3V6Z" fill="#222"/></svg>
<div class="a" style="left:223.68px;top:532.5px;width:0.6px;height:1.8px;background:#aaa"></div>
<svg style="left:232.36px;top:521px" width="10" height="10"><path d="M0.6 0.8H8.1V5.2M0.6 0.8V8.3H4.6" fill="none" stroke="#8c8c8c" stroke-width="0.8"/><path d="M1.3 1.5H7.4" stroke="#c9c9c9" stroke-width="0.5"/><rect x="0" y="0.2" width="1.3" height="1.3" fill="#6a6a6a"/><rect x="7.5" y="0.2" width="1.3" height="1.3" fill="#6a6a6a"/><rect x="0" y="7.6" width="1.3" height="1.3" fill="#6a6a6a"/><path d="M4.5 8.9L5 7.5L8.3 4.3L9.2 5.2L5.9 8.4Z" fill="#f2b84a"/><path d="M8.3 4.3L8.8 3.8L9.7 4.7L9.2 5.2Z" fill="#d06040"/></svg>
<div class="a" style="left:236.56px;top:532.5px;width:0.6px;height:1.8px;background:#aaa"></div>
<svg style="left:245.24px;top:521px" width="10" height="10"><path d="M0.3 2L2 0.3H7.5V7L5.8 8.7H0.3Z" fill="#5b9fd6"/><path d="M0.3 2L2 0.3H7.5L5.8 2Z" fill="#8cc3ec"/><path d="M5.8 2L7.5 0.3V7L5.8 8.7Z" fill="#3e7fb8"/><path d="M0.3 8.2H5.8" stroke="#c6d6e3" stroke-width="0.8"/><path d="M9.2 1.2V8" stroke="#222" stroke-width="0.75"/></svg>
<div class="a" style="left:249.44px;top:532.5px;width:0.6px;height:1.8px;background:#aaa"></div>
<svg style="left:258.12px;top:521px" width="10" height="10"><path d="M0.6 0.8H8.1V5.2M0.6 0.8V8.3H4.6" fill="none" stroke="#8c8c8c" stroke-width="0.8"/><path d="M1.3 1.5H7.4" stroke="#c9c9c9" stroke-width="0.5"/><rect x="0" y="0.2" width="1.3" height="1.3" fill="#6a6a6a"/><rect x="7.5" y="0.2" width="1.3" height="1.3" fill="#6a6a6a"/><rect x="0" y="7.6" width="1.3" height="1.3" fill="#6a6a6a"/><path d="M4.5 8.9L5 7.5L8.3 4.3L9.2 5.2L5.9 8.4Z" fill="#f2b84a"/><path d="M8.3 4.3L8.8 3.8L9.7 4.7L9.2 5.2Z" fill="#d06040"/></svg>
<div class="a" style="left:262.32px;top:532.5px;width:0.6px;height:1.8px;background:#aaa"></div>
<svg style="left:271.00px;top:521px" width="10" height="10"><path d="M0.3 2L2 0.3H7.5V7L5.8 8.7H0.3Z" fill="#5b9fd6"/><path d="M0.3 2L2 0.3H7.5L5.8 2Z" fill="#8cc3ec"/><path d="M5.8 2L7.5 0.3V7L5.8 8.7Z" fill="#3e7fb8"/><path d="M0.3 8.2H5.8" stroke="#c6d6e3" stroke-width="0.8"/><path d="M9.2 1.2V8" stroke="#222" stroke-width="0.75"/></svg>
<div class="a" style="left:275.20px;top:532.5px;width:0.6px;height:1.8px;background:#aaa"></div>
<svg style="left:283.88px;top:521px" width="10" height="10"><path d="M0.5 3L3 0.6H5.5Q9 1.5 9 5V9H0.5Z" fill="#e6e6e6" stroke="#888" stroke-width="0.6"/><path d="M1.5 5L5 1.2L7 2.8L3.5 6.5Z" fill="#5b9fd6"/></svg>
<div class="a" style="left:288.08px;top:532.5px;width:0.6px;height:1.8px;background:#aaa"></div>
<svg style="left:296.76px;top:521px" width="10" height="10"><path d="M0.5 3L3 0.6H5.5Q9 1.5 9 5V9H0.5Z" fill="#e6e6e6" stroke="#888" stroke-width="0.6"/><path d="M1.5 5L5 1.2L7 2.8L3.5 6.5Z" fill="#5b9fd6"/></svg>
<div class="a" style="left:300.96px;top:532.5px;width:0.6px;height:1.8px;background:#aaa"></div>
<svg style="left:309.64px;top:521px" width="10" height="10"><path d="M0.3 2L2 0.3H7.5V7L5.8 8.7H0.3Z" fill="#5b9fd6"/><path d="M0.3 2L2 0.3H7.5L5.8 2Z" fill="#8cc3ec"/><path d="M5.8 2L7.5 0.3V7L5.8 8.7Z" fill="#3e7fb8"/><path d="M0.3 8.2H5.8" stroke="#c6d6e3" stroke-width="0.8"/><path d="M9.2 1.2V8" stroke="#222" stroke-width="0.75"/></svg>
<div class="a" style="left:313.84px;top:532.5px;width:0.6px;height:1.8px;background:#aaa"></div>
<svg style="left:322.52px;top:521px" width="10" height="10"><path d="M0.5 3L2.5 0.5H5.5V7L3.5 9H0.5Z" fill="#eef3ee" stroke="#7a9a7a" stroke-width="0.6"/><path d="M3 3L5 0.8V7L3 9Z" fill="#6cbc7c"/><path d="M6.5 3.5L9 0.8V6.5L6.5 9Z" fill="#d8a070"/></svg>
<div class="a" style="left:326.72px;top:532.5px;width:0.6px;height:1.8px;background:#aaa"></div>
<svg style="left:335.40px;top:521px" width="10" height="10"><path d="M0.6 0.8H8.1V5.2M0.6 0.8V8.3H4.6" fill="none" stroke="#8c8c8c" stroke-width="0.8"/><path d="M1.3 1.5H7.4" stroke="#c9c9c9" stroke-width="0.5"/><rect x="0" y="0.2" width="1.3" height="1.3" fill="#6a6a6a"/><rect x="7.5" y="0.2" width="1.3" height="1.3" fill="#6a6a6a"/><rect x="0" y="7.6" width="1.3" height="1.3" fill="#6a6a6a"/><path d="M4.5 8.9L5 7.5L8.3 4.3L9.2 5.2L5.9 8.4Z" fill="#f2b84a"/><path d="M8.3 4.3L8.8 3.8L9.7 4.7L9.2 5.2Z" fill="#d06040"/></svg>
<div class="a" style="left:339.60px;top:532.5px;width:0.6px;height:1.8px;background:#aaa"></div>
<svg style="left:348.28px;top:521px" width="10" height="10"><path d="M0.3 2L2 0.3H7.5V7L5.8 8.7H0.3Z" fill="#5b9fd6"/><path d="M0.3 2L2 0.3H7.5L5.8 2Z" fill="#8cc3ec"/><path d="M5.8 2L7.5 0.3V7L5.8 8.7Z" fill="#3e7fb8"/><path d="M0.3 8.2H5.8" stroke="#c6d6e3" stroke-width="0.8"/><path d="M9.2 1.2V8" stroke="#222" stroke-width="0.75"/></svg>
<div class="a" style="left:352.48px;top:532.5px;width:0.6px;height:1.8px;background:#aaa"></div>
<svg style="left:361.16px;top:521px" width="10" height="10"><path d="M0.3 2L2 0.3H7.5V7L5.8 8.7H0.3Z" fill="#5b9fd6"/><path d="M0.3 2L2 0.3H7.5L5.8 2Z" fill="#8cc3ec"/><path d="M5.8 2L7.5 0.3V7L5.8 8.7Z" fill="#3e7fb8"/><path d="M0.3 8.2H5.8" stroke="#c6d6e3" stroke-width="0.8"/><path d="M9.2 1.2V8" stroke="#222" stroke-width="0.75"/></svg>
<div class="a" style="left:365.36px;top:532.5px;width:0.6px;height:1.8px;background:#aaa"></div>
<svg style="left:374.04px;top:521px" width="10" height="10"><path d="M0.5 3Q4.5 -0.5 8.5 3V8H0.5Z" fill="#5b9fd6"/><path d="M0.5 4.2Q4.5 1.5 8.5 4.2" stroke="#2f6ea8" stroke-width="1.1" fill="none"/><path d="M1 3Q4.5 0.3 8 3" stroke="#8cc3ec" stroke-width="0.8" fill="none"/></svg>
<div class="a" style="left:378.24px;top:532.5px;width:0.6px;height:1.8px;background:#aaa"></div>
<svg style="left:386.92px;top:521px" width="10" height="10"><path d="M0.5 3Q4.5 -0.5 8.5 3V8H0.5Z" fill="#5b9fd6"/><path d="M0.5 4.2Q4.5 1.5 8.5 4.2" stroke="#2f6ea8" stroke-width="1.1" fill="none"/><path d="M1 3Q4.5 0.3 8 3" stroke="#8cc3ec" stroke-width="0.8" fill="none"/></svg>
<div class="a" style="left:391.12px;top:532.5px;width:0.6px;height:1.8px;background:#aaa"></div>
<svg style="left:399.80px;top:521px" width="10" height="10"><path d="M0.3 2L2 0.3H7.5V7L5.8 8.7H0.3Z" fill="#5b9fd6"/><path d="M0.3 2L2 0.3H7.5L5.8 2Z" fill="#8cc3ec"/><path d="M5.8 2L7.5 0.3V7L5.8 8.7Z" fill="#3e7fb8"/><path d="M0.3 8.2H5.8" stroke="#c6d6e3" stroke-width="0.8"/><path d="M9.2 1.2V8" stroke="#222" stroke-width="0.75"/></svg>
<div class="a" style="left:404.00px;top:532.5px;width:0.6px;height:1.8px;background:#aaa"></div>
<svg style="left:412.68px;top:521px" width="10" height="10"><path d="M0.3 2L2 0.3H7.5V7L5.8 8.7H0.3Z" fill="#5b9fd6"/><path d="M0.3 2L2 0.3H7.5L5.8 2Z" fill="#8cc3ec"/><path d="M5.8 2L7.5 0.3V7L5.8 8.7Z" fill="#3e7fb8"/><path d="M0.3 8.2H5.8" stroke="#c6d6e3" stroke-width="0.8"/><path d="M9.2 1.2V8" stroke="#222" stroke-width="0.75"/></svg>
<div class="a" style="left:416.88px;top:532.5px;width:0.6px;height:1.8px;background:#aaa"></div>
<svg style="left:425.56px;top:521px" width="10" height="10"><path d="M0.6 0.8H8.1V5.2M0.6 0.8V8.3H4.6" fill="none" stroke="#8c8c8c" stroke-width="0.8"/><path d="M1.3 1.5H7.4" stroke="#c9c9c9" stroke-width="0.5"/><rect x="0" y="0.2" width="1.3" height="1.3" fill="#6a6a6a"/><rect x="7.5" y="0.2" width="1.3" height="1.3" fill="#6a6a6a"/><rect x="0" y="7.6" width="1.3" height="1.3" fill="#6a6a6a"/><path d="M4.5 8.9L5 7.5L8.3 4.3L9.2 5.2L5.9 8.4Z" fill="#f2b84a"/><path d="M8.3 4.3L8.8 3.8L9.7 4.7L9.2 5.2Z" fill="#d06040"/></svg>
<div class="a" style="left:429.76px;top:532.5px;width:0.6px;height:1.8px;background:#aaa"></div>
<svg style="left:438.44px;top:521px" width="10" height="10"><path d="M0.5 3Q4.5 -0.5 8.5 3V8H0.5Z" fill="#5b9fd6"/><path d="M0.5 4.2Q4.5 1.5 8.5 4.2" stroke="#2f6ea8" stroke-width="1.1" fill="none"/><path d="M1 3Q4.5 0.3 8 3" stroke="#8cc3ec" stroke-width="0.8" fill="none"/></svg>
<div class="a" style="left:442.64px;top:532.5px;width:0.6px;height:1.8px;background:#aaa"></div>
<svg style="left:451.32px;top:521px" width="10" height="10"><path d="M0.3 2L2 0.3H7.5V7L5.8 8.7H0.3Z" fill="#5b9fd6"/><path d="M0.3 2L2 0.3H7.5L5.8 2Z" fill="#8cc3ec"/><path d="M5.8 2L7.5 0.3V7L5.8 8.7Z" fill="#3e7fb8"/><path d="M0.3 8.2H5.8" stroke="#c6d6e3" stroke-width="0.8"/><path d="M9.2 1.2V8" stroke="#222" stroke-width="0.75"/></svg>
<div class="a" style="left:455.52px;top:532.5px;width:0.6px;height:1.8px;background:#aaa"></div>
<svg style="left:464.20px;top:521px" width="10" height="10"><path d="M0.3 2L2 0.3H7.5V7L5.8 8.7H0.3Z" fill="#5b9fd6"/><path d="M0.3 2L2 0.3H7.5L5.8 2Z" fill="#8cc3ec"/><path d="M5.8 2L7.5 0.3V7L5.8 8.7Z" fill="#3e7fb8"/><path d="M0.3 8.2H5.8" stroke="#c6d6e3" stroke-width="0.8"/><path d="M9.2 1.2V8" stroke="#222" stroke-width="0.75"/></svg>
<div class="a" style="left:468.40px;top:532.5px;width:0.6px;height:1.8px;background:#aaa"></div>
<svg style="left:477.08px;top:521px" width="10" height="10"><path d="M0.5 0.6H4.5Q9 1 9 5Q9 9 4.5 9H0.5Z" fill="#e3e3e3" stroke="#888" stroke-width="0.6"/><path d="M4.5 0.6Q9 1 9 5" stroke="#7aaee0" stroke-width="0.8" fill="none"/></svg>
<div class="a" style="left:481.28px;top:532.5px;width:0.6px;height:1.8px;background:#aaa"></div>
<svg style="left:489.96px;top:521px" width="10" height="10"><path d="M0.5 0.6H4.5Q9 1 9 5Q9 9 4.5 9H0.5Z" fill="#e3e3e3" stroke="#888" stroke-width="0.6"/><path d="M4.5 0.6Q9 1 9 5" stroke="#7aaee0" stroke-width="0.8" fill="none"/></svg>
<div class="a" style="left:494.16px;top:532.5px;width:0.6px;height:1.8px;background:#aaa"></div>
<svg style="left:502.84px;top:521px" width="10" height="10"><path d="M4.5 0.5L9 9H0Z" fill="#dcdcdc" stroke="#888" stroke-width="0.5"/><path d="M4.5 0.5L9 9H4.5Z" fill="#5b9fd6"/></svg>
<div class="a" style="left:507.04px;top:532.5px;width:0.6px;height:1.8px;background:#aaa"></div>
<svg style="left:515.72px;top:521px" width="10" height="10"><path d="M0.3 2L2 0.3H7.5V7L5.8 8.7H0.3Z" fill="#5b9fd6"/><path d="M0.3 2L2 0.3H7.5L5.8 2Z" fill="#8cc3ec"/><path d="M5.8 2L7.5 0.3V7L5.8 8.7Z" fill="#3e7fb8"/><path d="M0.3 8.2H5.8" stroke="#c6d6e3" stroke-width="0.8"/><path d="M9.2 1.2V8" stroke="#222" stroke-width="0.75"/></svg>
<div class="a" style="left:519.92px;top:532.5px;width:0.6px;height:1.8px;background:#aaa"></div>
<svg style="left:528.60px;top:521px" width="10" height="10"><path d="M0.3 2L2 0.3H7.5V7L5.8 8.7H0.3Z" fill="#5b9fd6"/><path d="M0.3 2L2 0.3H7.5L5.8 2Z" fill="#8cc3ec"/><path d="M5.8 2L7.5 0.3V7L5.8 8.7Z" fill="#3e7fb8"/><path d="M0.3 8.2H5.8" stroke="#c6d6e3" stroke-width="0.8"/><path d="M9.2 1.2V8" stroke="#222" stroke-width="0.75"/></svg>
<div class="a" style="left:532.80px;top:532.5px;width:0.6px;height:1.8px;background:#aaa"></div>
<svg style="left:541.48px;top:521px" width="10" height="10"><path d="M0.6 0.8H8.1V5.2M0.6 0.8V8.3H4.6" fill="none" stroke="#8c8c8c" stroke-width="0.8"/><path d="M1.3 1.5H7.4" stroke="#c9c9c9" stroke-width="0.5"/><rect x="0" y="0.2" width="1.3" height="1.3" fill="#6a6a6a"/><rect x="7.5" y="0.2" width="1.3" height="1.3" fill="#6a6a6a"/><rect x="0" y="7.6" width="1.3" height="1.3" fill="#6a6a6a"/><path d="M4.5 8.9L5 7.5L8.3 4.3L9.2 5.2L5.9 8.4Z" fill="#f2b84a"/><path d="M8.3 4.3L8.8 3.8L9.7 4.7L9.2 5.2Z" fill="#d06040"/></svg>
<div class="a" style="left:545.68px;top:532.5px;width:0.6px;height:1.8px;background:#aaa"></div>
<svg style="left:554.36px;top:521px" width="10" height="10"><path d="M0.3 2L2 0.3H7.5V7L5.8 8.7H0.3Z" fill="#5b9fd6"/><path d="M0.3 2L2 0.3H7.5L5.8 2Z" fill="#8cc3ec"/><path d="M5.8 2L7.5 0.3V7L5.8 8.7Z" fill="#3e7fb8"/><path d="M0.3 8.2H5.8" stroke="#c6d6e3" stroke-width="0.8"/><path d="M9.2 1.2V8" stroke="#222" stroke-width="0.75"/></svg>
<div class="a" style="left:558.56px;top:532.5px;width:0.6px;height:1.8px;background:#aaa"></div>
<svg style="left:567.24px;top:521px" width="10" height="10"><path d="M0.6 0.8H8.1V5.2M0.6 0.8V8.3H4.6" fill="none" stroke="#8c8c8c" stroke-width="0.8"/><path d="M1.3 1.5H7.4" stroke="#c9c9c9" stroke-width="0.5"/><rect x="0" y="0.2" width="1.3" height="1.3" fill="#6a6a6a"/><rect x="7.5" y="0.2" width="1.3" height="1.3" fill="#6a6a6a"/><rect x="0" y="7.6" width="1.3" height="1.3" fill="#6a6a6a"/><path d="M4.5 8.9L5 7.5L8.3 4.3L9.2 5.2L5.9 8.4Z" fill="#f2b84a"/><path d="M8.3 4.3L8.8 3.8L9.7 4.7L9.2 5.2Z" fill="#d06040"/></svg>
<div class="a" style="left:571.44px;top:532.5px;width:0.6px;height:1.8px;background:#aaa"></div>
<svg style="left:580.12px;top:521px" width="10" height="10"><path d="M0.3 2L2 0.3H7.5V7L5.8 8.7H0.3Z" fill="#5b9fd6"/><path d="M0.3 2L2 0.3H7.5L5.8 2Z" fill="#8cc3ec"/><path d="M5.8 2L7.5 0.3V7L5.8 8.7Z" fill="#3e7fb8"/><path d="M0.3 8.2H5.8" stroke="#c6d6e3" stroke-width="0.8"/><path d="M9.2 1.2V8" stroke="#222" stroke-width="0.75"/></svg>
<div class="a" style="left:584.32px;top:532.5px;width:0.6px;height:1.8px;background:#aaa"></div>
<svg style="left:593.00px;top:521px" width="10" height="10"><path d="M0.3 2L2 0.3H7.5V7L5.8 8.7H0.3Z" fill="#5b9fd6"/><path d="M0.3 2L2 0.3H7.5L5.8 2Z" fill="#8cc3ec"/><path d="M5.8 2L7.5 0.3V7L5.8 8.7Z" fill="#3e7fb8"/><path d="M0.3 8.2H5.8" stroke="#c6d6e3" stroke-width="0.8"/><path d="M9.2 1.2V8" stroke="#222" stroke-width="0.75"/></svg>
<div class="a" style="left:597.20px;top:532.5px;width:0.6px;height:1.8px;background:#aaa"></div>
<svg style="left:605.88px;top:521px" width="10" height="10"><path d="M0.5 3L3 0.6H5.5Q9 1.5 9 5V9H0.5Z" fill="#e6e6e6" stroke="#888" stroke-width="0.6"/><path d="M1.5 5L5 1.2L7 2.8L3.5 6.5Z" fill="#5b9fd6"/></svg>
<div class="a" style="left:610.08px;top:532.5px;width:0.6px;height:1.8px;background:#aaa"></div>
<svg style="left:618.76px;top:521px" width="10" height="10"><path d="M0.6 0.8H8.1V5.2M0.6 0.8V8.3H4.6" fill="none" stroke="#8c8c8c" stroke-width="0.8"/><path d="M1.3 1.5H7.4" stroke="#c9c9c9" stroke-width="0.5"/><rect x="0" y="0.2" width="1.3" height="1.3" fill="#6a6a6a"/><rect x="7.5" y="0.2" width="1.3" height="1.3" fill="#6a6a6a"/><rect x="0" y="7.6" width="1.3" height="1.3" fill="#6a6a6a"/><path d="M4.5 8.9L5 7.5L8.3 4.3L9.2 5.2L5.9 8.4Z" fill="#f2b84a"/><path d="M8.3 4.3L8.8 3.8L9.7 4.7L9.2 5.2Z" fill="#d06040"/></svg>
<div class="a" style="left:622.96px;top:532.5px;width:0.6px;height:1.8px;background:#aaa"></div>
<svg style="left:631.64px;top:521px" width="10" height="10"><path d="M0.3 2L2 0.3H7.5V7L5.8 8.7H0.3Z" fill="#5b9fd6"/><path d="M0.3 2L2 0.3H7.5L5.8 2Z" fill="#8cc3ec"/><path d="M5.8 2L7.5 0.3V7L5.8 8.7Z" fill="#3e7fb8"/><path d="M0.3 8.2H5.8" stroke="#c6d6e3" stroke-width="0.8"/><path d="M9.2 1.2V8" stroke="#222" stroke-width="0.75"/></svg>
<div class="a" style="left:635.84px;top:532.5px;width:0.6px;height:1.8px;background:#aaa"></div>
<svg style="left:644.52px;top:521px" width="10" height="10"><path d="M0.6 0.8H8.1V5.2M0.6 0.8V8.3H4.6" fill="none" stroke="#8c8c8c" stroke-width="0.8"/><path d="M1.3 1.5H7.4" stroke="#c9c9c9" stroke-width="0.5"/><rect x="0" y="0.2" width="1.3" height="1.3" fill="#6a6a6a"/><rect x="7.5" y="0.2" width="1.3" height="1.3" fill="#6a6a6a"/><rect x="0" y="7.6" width="1.3" height="1.3" fill="#6a6a6a"/><path d="M4.5 8.9L5 7.5L8.3 4.3L9.2 5.2L5.9 8.4Z" fill="#f2b84a"/><path d="M8.3 4.3L8.8 3.8L9.7 4.7L9.2 5.2Z" fill="#d06040"/></svg>
<div class="a" style="left:648.72px;top:532.5px;width:0.6px;height:1.8px;background:#aaa"></div>
<svg style="left:657.40px;top:521px" width="10" height="10"><path d="M0.3 2L2 0.3H7.5V7L5.8 8.7H0.3Z" fill="#5b9fd6"/><path d="M0.3 2L2 0.3H7.5L5.8 2Z" fill="#8cc3ec"/><path d="M5.8 2L7.5 0.3V7L5.8 8.7Z" fill="#3e7fb8"/><path d="M0.3 8.2H5.8" stroke="#c6d6e3" stroke-width="0.8"/><path d="M9.2 1.2V8" stroke="#222" stroke-width="0.75"/></svg>
<div class="a" style="left:661.60px;top:532.5px;width:0.6px;height:1.8px;background:#aaa"></div>
<svg style="left:670.28px;top:521px" width="10" height="10"><path d="M0.3 2L2 0.3H7.5V7L5.8 8.7H0.3Z" fill="#5b9fd6"/><path d="M0.3 2L2 0.3H7.5L5.8 2Z" fill="#8cc3ec"/><path d="M5.8 2L7.5 0.3V7L5.8 8.7Z" fill="#3e7fb8"/><path d="M0.3 8.2H5.8" stroke="#c6d6e3" stroke-width="0.8"/><path d="M9.2 1.2V8" stroke="#222" stroke-width="0.75"/></svg>
<div class="a" style="left:674.48px;top:532.5px;width:0.6px;height:1.8px;background:#aaa"></div>
<svg style="left:683.16px;top:521px" width="10" height="10"><path d="M0.6 0.8H8.1V5.2M0.6 0.8V8.3H4.6" fill="none" stroke="#8c8c8c" stroke-width="0.8"/><path d="M1.3 1.5H7.4" stroke="#c9c9c9" stroke-width="0.5"/><rect x="0" y="0.2" width="1.3" height="1.3" fill="#6a6a6a"/><rect x="7.5" y="0.2" width="1.3" height="1.3" fill="#6a6a6a"/><rect x="0" y="7.6" width="1.3" height="1.3" fill="#6a6a6a"/><path d="M4.5 8.9L5 7.5L8.3 4.3L9.2 5.2L5.9 8.4Z" fill="#f2b84a"/><path d="M8.3 4.3L8.8 3.8L9.7 4.7L9.2 5.2Z" fill="#d06040"/></svg>
<div class="a" style="left:687.36px;top:532.5px;width:0.6px;height:1.8px;background:#aaa"></div>
<svg style="left:696.04px;top:521px" width="10" height="10"><path d="M0.3 2L2 0.3H7.5V7L5.8 8.7H0.3Z" fill="#5b9fd6"/><path d="M0.3 2L2 0.3H7.5L5.8 2Z" fill="#8cc3ec"/><path d="M5.8 2L7.5 0.3V7L5.8 8.7Z" fill="#3e7fb8"/><path d="M0.3 8.2H5.8" stroke="#c6d6e3" stroke-width="0.8"/><path d="M9.2 1.2V8" stroke="#222" stroke-width="0.75"/></svg>
<div class="a" style="left:700.24px;top:532.5px;width:0.6px;height:1.8px;background:#aaa"></div>
<svg style="left:708.92px;top:521px" width="10" height="10"><path d="M0.5 3L2.5 0.5H5.5V7L3.5 9H0.5Z" fill="#eef3ee" stroke="#7a9a7a" stroke-width="0.6"/><path d="M3 3L5 0.8V7L3 9Z" fill="#6cbc7c"/><path d="M6.5 3.5L9 0.8V6.5L6.5 9Z" fill="#d8a070"/></svg>
<div class="a" style="left:713.12px;top:532.5px;width:0.6px;height:1.8px;background:#aaa"></div>
<svg style="left:721.80px;top:521px" width="10" height="10"><path d="M0.6 0.8H8.1V5.2M0.6 0.8V8.3H4.6" fill="none" stroke="#8c8c8c" stroke-width="0.8"/><path d="M1.3 1.5H7.4" stroke="#c9c9c9" stroke-width="0.5"/><rect x="0" y="0.2" width="1.3" height="1.3" fill="#6a6a6a"/><rect x="7.5" y="0.2" width="1.3" height="1.3" fill="#6a6a6a"/><rect x="0" y="7.6" width="1.3" height="1.3" fill="#6a6a6a"/><path d="M4.5 8.9L5 7.5L8.3 4.3L9.2 5.2L5.9 8.4Z" fill="#f2b84a"/><path d="M8.3 4.3L8.8 3.8L9.7 4.7L9.2 5.2Z" fill="#d06040"/></svg>
<div class="a" style="left:726.00px;top:532.5px;width:0.6px;height:1.8px;background:#aaa"></div>
<svg style="left:734.68px;top:521px" width="10" height="10"><path d="M0.3 2L2 0.3H7.5V7L5.8 8.7H0.3Z" fill="#5b9fd6"/><path d="M0.3 2L2 0.3H7.5L5.8 2Z" fill="#8cc3ec"/><path d="M5.8 2L7.5 0.3V7L5.8 8.7Z" fill="#3e7fb8"/><path d="M0.3 8.2H5.8" stroke="#c6d6e3" stroke-width="0.8"/><path d="M9.2 1.2V8" stroke="#222" stroke-width="0.75"/></svg>
<div class="a" style="left:738.88px;top:532.5px;width:0.6px;height:1.8px;background:#aaa"></div>
<svg style="left:747.56px;top:521px" width="10" height="10"><path d="M0.5 3L2.5 0.5H5.5V7L3.5 9H0.5Z" fill="#eef3ee" stroke="#7a9a7a" stroke-width="0.6"/><path d="M3 3L5 0.8V7L3 9Z" fill="#6cbc7c"/><path d="M6.5 3.5L9 0.8V6.5L6.5 9Z" fill="#d8a070"/></svg>
<div class="a" style="left:751.76px;top:532.5px;width:0.6px;height:1.8px;background:#aaa"></div>
<svg style="left:760.44px;top:521px" width="10" height="10"><path d="M0.6 0.8H8.1V5.2M0.6 0.8V8.3H4.6" fill="none" stroke="#8c8c8c" stroke-width="0.8"/><path d="M1.3 1.5H7.4" stroke="#c9c9c9" stroke-width="0.5"/><rect x="0" y="0.2" width="1.3" height="1.3" fill="#6a6a6a"/><rect x="7.5" y="0.2" width="1.3" height="1.3" fill="#6a6a6a"/><rect x="0" y="7.6" width="1.3" height="1.3" fill="#6a6a6a"/><path d="M4.5 8.9L5 7.5L8.3 4.3L9.2 5.2L5.9 8.4Z" fill="#f2b84a"/><path d="M8.3 4.3L8.8 3.8L9.7 4.7L9.2 5.2Z" fill="#d06040"/></svg>
<div class="a" style="left:764.64px;top:532.5px;width:0.6px;height:1.8px;background:#aaa"></div>
<svg style="left:773.32px;top:521px" width="10" height="10"><path d="M0.3 2L2 0.3H7.5V7L5.8 8.7H0.3Z" fill="#5b9fd6"/><path d="M0.3 2L2 0.3H7.5L5.8 2Z" fill="#8cc3ec"/><path d="M5.8 2L7.5 0.3V7L5.8 8.7Z" fill="#3e7fb8"/><path d="M0.3 8.2H5.8" stroke="#c6d6e3" stroke-width="0.8"/><path d="M9.2 1.2V8" stroke="#222" stroke-width="0.75"/></svg>
<div class="a" style="left:777.52px;top:532.5px;width:0.6px;height:1.8px;background:#aaa"></div>
<svg style="left:786.20px;top:521px" width="10" height="10"><path d="M0.5 3L3 0.6H5.5Q9 1.5 9 5V9H0.5Z" fill="#e6e6e6" stroke="#888" stroke-width="0.6"/><path d="M1.5 5L5 1.2L7 2.8L3.5 6.5Z" fill="#5b9fd6"/></svg>
<div class="a" style="left:790.40px;top:532.5px;width:0.6px;height:1.8px;background:#aaa"></div>
<svg style="left:799.08px;top:521px" width="10" height="10"><path d="M0.6 0.8H8.1V5.2M0.6 0.8V8.3H4.6" fill="none" stroke="#8c8c8c" stroke-width="0.8"/><path d="M1.3 1.5H7.4" stroke="#c9c9c9" stroke-width="0.5"/><rect x="0" y="0.2" width="1.3" height="1.3" fill="#6a6a6a"/><rect x="7.5" y="0.2" width="1.3" height="1.3" fill="#6a6a6a"/><rect x="0" y="7.6" width="1.3" height="1.3" fill="#6a6a6a"/><path d="M4.5 8.9L5 7.5L8.3 4.3L9.2 5.2L5.9 8.4Z" fill="#f2b84a"/><path d="M8.3 4.3L8.8 3.8L9.7 4.7L9.2 5.2Z" fill="#d06040"/></svg>
<div class="a" style="left:803.28px;top:532.5px;width:0.6px;height:1.8px;background:#aaa"></div>
<svg style="left:811.96px;top:521px" width="10" height="10"><path d="M0.3 2L2 0.3H7.5V7L5.8 8.7H0.3Z" fill="#5b9fd6"/><path d="M0.3 2L2 0.3H7.5L5.8 2Z" fill="#8cc3ec"/><path d="M5.8 2L7.5 0.3V7L5.8 8.7Z" fill="#3e7fb8"/><path d="M0.3 8.2H5.8" stroke="#c6d6e3" stroke-width="0.8"/><path d="M9.2 1.2V8" stroke="#222" stroke-width="0.75"/></svg>
<div class="a" style="left:816.16px;top:532.5px;width:0.6px;height:1.8px;background:#aaa"></div>
<svg style="left:824.84px;top:521px" width="10" height="10"><path d="M0.6 0.8H8.1V5.2M0.6 0.8V8.3H4.6" fill="none" stroke="#8c8c8c" stroke-width="0.8"/><path d="M1.3 1.5H7.4" stroke="#c9c9c9" stroke-width="0.5"/><rect x="0" y="0.2" width="1.3" height="1.3" fill="#6a6a6a"/><rect x="7.5" y="0.2" width="1.3" height="1.3" fill="#6a6a6a"/><rect x="0" y="7.6" width="1.3" height="1.3" fill="#6a6a6a"/><path d="M4.5 8.9L5 7.5L8.3 4.3L9.2 5.2L5.9 8.4Z" fill="#f2b84a"/><path d="M8.3 4.3L8.8 3.8L9.7 4.7L9.2 5.2Z" fill="#d06040"/></svg>
<div class="a" style="left:829.04px;top:532.5px;width:0.6px;height:1.8px;background:#aaa"></div>
<div class="a" style="left:82px;top:534px;width:748px;height:0.8px;background:#bdbdbd"></div>
<svg style="left:830px;top:517px" width="9" height="20"><path d="M0.8 0.5H7.6L5.2 3.5H3.2Z" fill="#444"/><rect x="3.3" y="3" width="1.8" height="15" fill="#444"/></svg>
<svg style="left:1008px;top:521px" width="10" height="10"><path d="M5 0.3L6 1.7L7.7 1.2L7.8 3L9.5 3.8L8.5 5.2L9.3 6.9L7.5 7.2L7 9L5.4 8.2L4 9.4L3.3 7.7L1.5 7.6L2 5.9L0.5 4.8L2 3.8L1.7 2L3.5 2Z" fill="#8a8a8a"/><circle cx="5" cy="5" r="1.9" fill="#f0f0f0"/></svg>
</body></html>
